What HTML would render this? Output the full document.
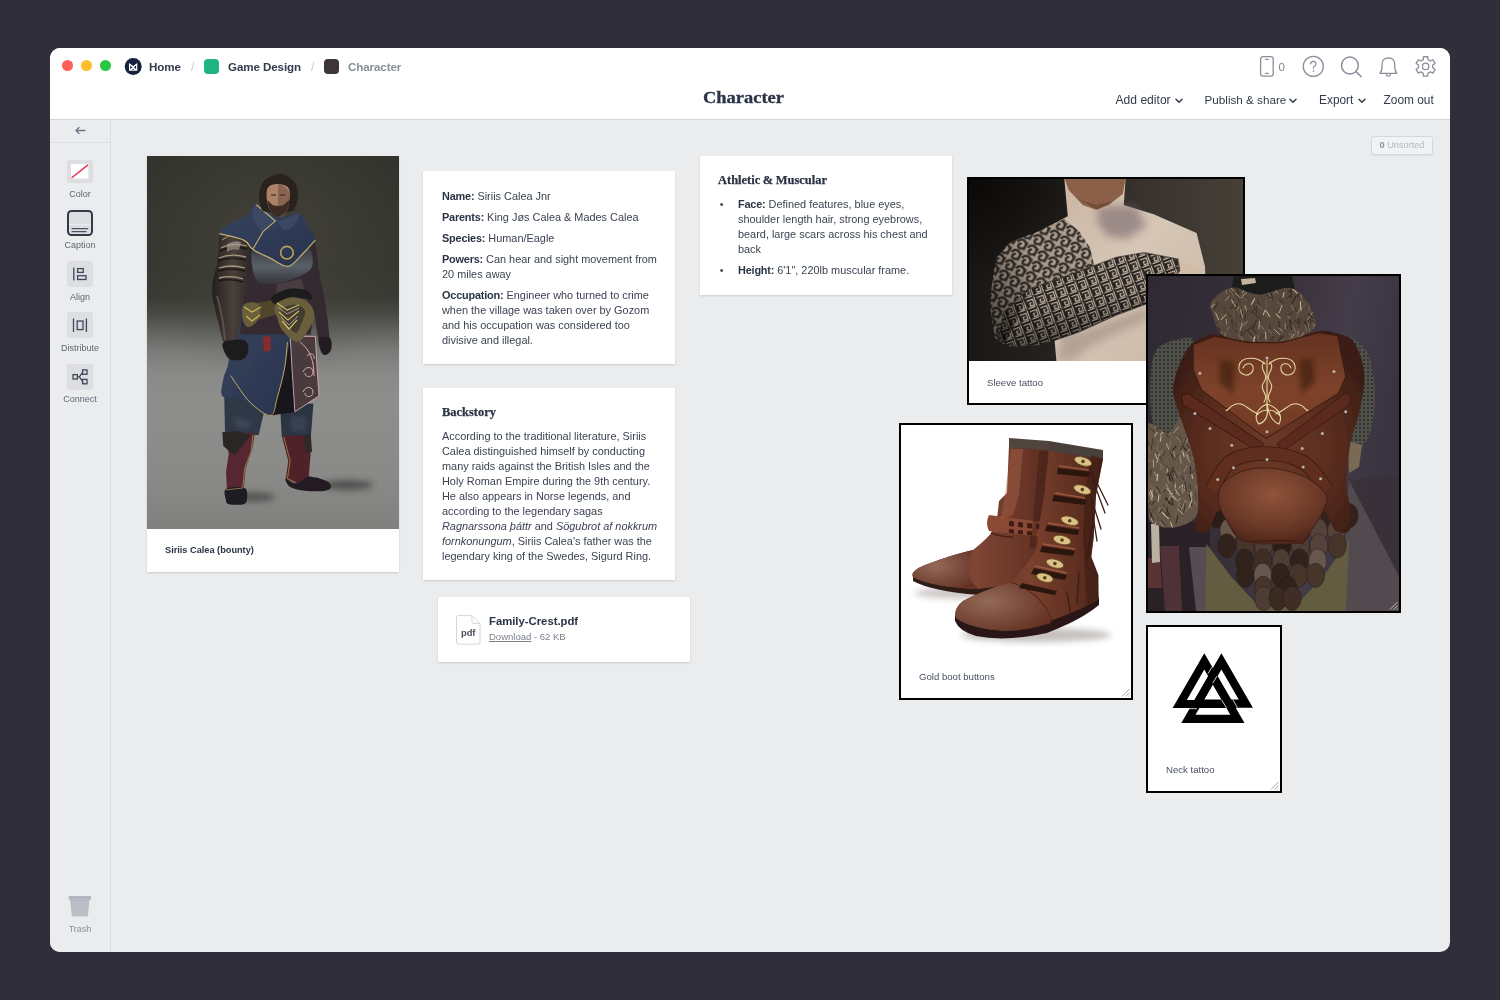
<!DOCTYPE html>
<html>
<head>
<meta charset="utf-8">
<title>Character</title>
<style>
*{box-sizing:border-box;margin:0;padding:0}
html,body{width:1500px;height:1000px;overflow:hidden;background:#302e39;font-family:"Liberation Sans",sans-serif;color:#323b4a}
#win{position:absolute;left:50px;top:48px;width:1400px;height:904px;border-radius:10px;overflow:hidden;background:#ebecee;will-change:transform}
#hdr{position:absolute;left:0;top:0;width:1400px;height:72px;background:#fff;border-bottom:1px solid #d4d6da}
.dot{position:absolute;top:12px;width:11px;height:11px;border-radius:50%}
.crumb{position:absolute;top:11.500px;font-size:11.6px;font-weight:bold;color:#323b4a;line-height:14px;letter-spacing:-0.1px}
.sep{position:absolute;top:11.500px;font-size:12px;color:#c9ccd1;line-height:14px}
.sq{position:absolute;top:11px;width:15px;height:15px;border-radius:4px}
#title{position:absolute;left:0;width:1387px;text-align:center;top:38.700px;-webkit-text-stroke:.3px #2b3445;font-family:"Liberation Serif",serif;font-weight:bold;font-size:17.6px;line-height:20px;color:#2b3445;transform:scaleX(1.05)}
.menu{position:absolute;top:45px;font-size:11.9px;line-height:14px;color:#323b4a;white-space:nowrap}
#side{position:absolute;left:0;top:72px;width:61px;height:832px;border-right:1px solid #dcdde0;background:#ebecee}
#back{position:absolute;left:0;top:0;width:60px;height:23px;border-bottom:1px solid #dcdde0}
.tool{position:absolute;left:0;width:60px;text-align:center;font-size:9px;line-height:11px;color:#5f6672}
.tbox{position:absolute;left:17px;width:26px;height:26px;border-radius:3px;background:#dddee1}
.card{position:absolute;background:#fff;box-shadow:0 1px 2px rgba(0,0,0,.14)}
.txt{font-size:10.2px;line-height:15px;color:#3b4352;white-space:nowrap}
.sx{transform:scaleX(1.07);transform-origin:0 0}
.txt b{color:#2b3445;letter-spacing:-.18px}
.txt p{margin-bottom:6px}
.h{font-family:"Liberation Serif",serif;font-weight:bold;font-size:12.100px;line-height:15px;color:#2b3445;transform:scaleX(1.03);transform-origin:0 0;-webkit-text-stroke:.25px #2b3445;word-spacing:-.5px}
.bimg{position:absolute;background:#fff;border:2px solid #000}
.cap{position:absolute;font-size:9.6px;line-height:11px;color:#4a5160;white-space:nowrap}
</style>
</head>
<body>
<div id="win">
  <div id="hdr">
    <div class="dot" style="left:12px;background:#fe5f57"></div>
    <div class="dot" style="left:31px;background:#febc2e"></div>
    <div class="dot" style="left:49.5px;background:#28c840"></div>

    <svg style="position:absolute;left:74px;top:9px" width="19" height="19" viewBox="0 0 19 19"><circle cx="9.200" cy="9.600" r="8.500" fill="#15213a"/><path d="M5 6L9.200 8.900L13.300 6V13.800H5z" fill="#fff"/><path d="M6.200 8.400l2.100 1.900-2.100 1.900zM12.100 8.400l-2.100 1.900 2.100 1.900zM8.100 13l1.100-1.300 1.100 1.300z" fill="#15213a"/></svg>

    <div class="crumb" style="left:99px">Home</div>
    <div class="sep" style="left:141px">/</div>
    <div class="sq" style="left:154px;background:#1fb583"></div>
    <div class="crumb" style="left:178px">Game Design</div>
    <div class="sep" style="left:261px">/</div>
    <div class="sq" style="left:274px;background:#3e3536"></div>
    <div class="crumb" style="left:298px;color:#8a8f99">Character</div>
    <div id="title">Character</div>

    <svg style="position:absolute;left:1205px;top:5px" width="190" height="28" viewBox="0 0 190 28" fill="none" stroke="#8a8f99" stroke-width="1.3" stroke-linecap="round" stroke-linejoin="round">
      <rect x="5.6" y="3.6" width="12.6" height="19.6" rx="2.4"/><path d="M10.6 6.3h2.6M10.4 20.3h3"/>
      <circle cx="58.3" cy="13.4" r="10"/><path d="M55.6 10.9q.2-2.5 2.8-2.5 2.6.1 2.6 2.3 0 1.500-1.400 2.300-1.300.8-1.300 2.200" stroke-width="1.2"/><circle cx="58.300" cy="18" r=".500" fill="#8a8f99" stroke-width=".6"/>
      <circle cx="94.900" cy="12.500" r="8.400" stroke-width="1.500"/><path d="M101 18.600l5.200 5.200" stroke-width="1.500"/>
      <path d="M125 20.300q2-2.300 2-5.800v-3q0-6.300 6.400-6.600 6.400.3 6.400 6.600v3q0 3.500 2 5.800z"/><path d="M131.400 21.300q.3 1.900 2 1.900 1.700 0 2-1.900"/>
      <circle cx="170.6" cy="13.4" r="3.2"/>
      <path d="M172.94 6.59L172.74 3.73L168.46 3.73L168.26 6.59L165.88 7.97L163.30 6.71L161.16 10.42L163.53 12.03L163.53 14.77L161.16 16.38L163.30 20.09L165.88 18.83L168.26 20.21L168.46 23.07L172.74 23.07L172.94 20.21L175.32 18.83L177.90 20.09L180.04 16.38L177.67 14.77L177.67 12.03L180.04 10.42L177.90 6.71L175.32 7.97z"/>
    </svg>
    <div style="position:absolute;left:1228.600px;top:13.300px;font-size:11.500px;line-height:12px;color:#7d828d">0</div>

    <div class="menu" style="left:1065.500px;font-size:12.1px">Add editor</div>
    <svg style="position:absolute;left:1125px;top:50px" width="8" height="6" viewBox="0 0 8 6"><path d="M1 1.200l3 3 3-3" fill="none" stroke="#323b4a" stroke-width="1.500" stroke-linecap="round" stroke-linejoin="round"/></svg>
    <div class="menu" style="left:1154.500px;font-size:11.7px">Publish &amp; share</div>
    <svg style="position:absolute;left:1239px;top:50px" width="8" height="6" viewBox="0 0 8 6"><path d="M1 1.200l3 3 3-3" fill="none" stroke="#323b4a" stroke-width="1.500" stroke-linecap="round" stroke-linejoin="round"/></svg>
    <div class="menu" style="left:1269px">Export</div>
    <svg style="position:absolute;left:1308px;top:50px" width="8" height="6" viewBox="0 0 8 6"><path d="M1 1.200l3 3 3-3" fill="none" stroke="#323b4a" stroke-width="1.500" stroke-linecap="round" stroke-linejoin="round"/></svg>
    <div class="menu" style="left:1333.500px">Zoom out</div>
  </div>
  <div id="side">
    <div id="back"></div>

    <svg style="position:absolute;left:25px;top:5px" width="11" height="11" viewBox="0 0 11 11"><path d="M1 5.5h9M4 2.5l-3 3 3 3" fill="none" stroke="#6f7683" stroke-width="1.3" stroke-linecap="round" stroke-linejoin="round"/></svg>
    <!-- color -->
    <div class="tbox" style="top:40px;height:23px"></div>
    <svg style="position:absolute;left:21px;top:44px" width="18" height="15" viewBox="0 0 18 15"><rect width="17.4" height="14.6" fill="#fff"/><path d="M0.5 14L17 0.8" stroke="#e8335f" stroke-width="1.6"/></svg>
    <div class="tool" style="top:69px">Color</div>
    <!-- caption -->
    <div class="tbox" style="top:90px;background:#dddee1;border:2px solid #323b4a;border-radius:4.500px"></div>
    <svg style="position:absolute;left:17px;top:90px" width="26" height="26" viewBox="0 0 26 26"><path d="M2 14.5h22" stroke="#ebecee" stroke-width="1"/><path d="M4.6 18.6h16.6M4.6 21.6h15" stroke="#4a5262" stroke-width="1.1"/></svg>
    <div class="tool" style="top:120px">Caption</div>
    <!-- align -->
    <div class="tbox" style="top:141px"></div>
    <svg style="position:absolute;left:17px;top:141px" width="26" height="26" viewBox="0 0 26 26"><path d="M6.8 6.5v13" stroke="#3f4757" stroke-width="1.3" fill="none"/><rect x="10.6" y="7.6" width="5.6" height="3.8" fill="none" stroke="#3f4757" stroke-width="1.3"/><rect x="10.6" y="14.7" width="8.4" height="3.8" fill="none" stroke="#3f4757" stroke-width="1.3"/></svg>
    <div class="tool" style="top:172px">Align</div>
    <!-- distribute -->
    <div class="tbox" style="top:192px"></div>
    <svg style="position:absolute;left:17px;top:192px" width="26" height="26" viewBox="0 0 26 26"><path d="M6.5 6.5v13.5M19.4 6.5v13.5" stroke="#3f4757" stroke-width="1.3" fill="none"/><rect x="10.2" y="9" width="5.8" height="8.6" fill="none" stroke="#3f4757" stroke-width="1.3"/></svg>
    <div class="tool" style="top:223px">Distribute</div>
    <!-- connect -->
    <div class="tbox" style="top:244px"></div>
    <svg style="position:absolute;left:17px;top:244px" width="26" height="26" viewBox="0 0 26 26"><g fill="none" stroke="#3f4757" stroke-width="1.3"><rect x="6" y="10.6" width="4.4" height="4.4"/><rect x="15.6" y="5.9" width="4.4" height="4.4"/><rect x="15.6" y="15.4" width="4.4" height="4.4"/><path d="M10.4 12.8h2l3.2-4.4M12.4 12.8l3.2 4.6"/></g></svg>
    <div class="tool" style="top:274px">Connect</div>
    <!-- trash -->
    <svg style="position:absolute;left:18px;top:775px" width="24" height="23" viewBox="0 0 24 23"><path d="M2.2 4.5h19.2l-1.3 15.4q-.2 1.6-1.8 1.6H5.4q-1.6 0-1.8-1.6z" fill="#bcbec5"/><rect x="0.8" y="1" width="22.2" height="3.8" rx="0.6" fill="#b3b6be"/><path d="M2.4 5.4h19" stroke="#aab0bb" stroke-width="0.8"/></svg>
    <div class="tool" style="top:804px;color:#8a8f99">Trash</div>

  </div>

  <div style="position:absolute;left:1321px;top:88px;width:62px;height:19px;border:1px solid #d5d7db;border-radius:3px;background:#f1f2f3;box-shadow:0 1px 1px rgba(0,0,0,.06);font-size:9.200px;line-height:17px;color:#b5b8be;text-align:center;white-space:nowrap"><b style="color:#8a8f99">0</b> Unsorted</div>


  <!-- character card -->
  <div class="card" style="left:97px;top:108px;width:252px;height:416px">
    <div id="charimg" style="position:absolute;left:0;top:0;width:252px;height:373px;background:radial-gradient(ellipse 60% 38% at 50% 22%,rgba(75,75,66,.55) 0%,rgba(75,75,66,0) 100%),linear-gradient(#33332d 0%,#363630 30%,#3a3a34 38%,#4a4a45 42.500%,#646461 47.500%,#7b7b79 52.500%,#898987 58%,#8e8e8c 65%,#8a8a88 85%,#80807e 100%);overflow:hidden"><svg id="charsvg" style="position:absolute;left:0;top:0" width="252" height="372" viewBox="0 0 252 372">
<defs>
<filter id="cb" x="-5%" y="-5%" width="110%" height="110%"><feGaussianBlur stdDeviation=".55"/></filter>
<filter id="cs" x="-30%" y="-100%" width="160%" height="300%"><feGaussianBlur stdDeviation="3"/></filter>
<filter id="cs2" x="-30%" y="-30%" width="160%" height="160%"><feGaussianBlur stdDeviation="2"/></filter>
<linearGradient id="cblue" x1="0" y1="0" x2="1" y2="1"><stop offset="0" stop-color="#36435f"/><stop offset="1" stop-color="#29334d"/></linearGradient>
<linearGradient id="csteel" x1="0" y1="0" x2="0" y2="1"><stop offset="0" stop-color="#3b3f45"/><stop offset=".5" stop-color="#596067"/><stop offset="1" stop-color="#34353a"/></linearGradient>
<linearGradient id="carm" x1="0" y1="0" x2="1" y2="0"><stop offset="0" stop-color="#241f1e"/><stop offset=".5" stop-color="#4a403b"/><stop offset="1" stop-color="#2a2423"/></linearGradient>
</defs>
<ellipse cx="200" cy="329" rx="26" ry="5" fill="#3c3c3c" opacity=".75" filter="url(#cs)"/>
<ellipse cx="108" cy="341" rx="20" ry="4.500" fill="#3c3c3c" opacity=".7" filter="url(#cs)"/>
<g filter="url(#cb)">
<!-- legs -->
<path d="M77.2 238.1L119.0 247.4L111.6 279.0L78.1 279.0Z" fill="#2f3746"/><path d="M133.0 249.2L166.4 247.4L163.7 282.7L134.8 280.8Z" fill="#2c3442"/>
<path d="M87.4 260.4L104.1 264.1L101.4 273.4L87.4 271.5Z" fill="#56657a" opacity=".3" filter="url(#cs2)"/><path d="M143.2 260.4L159.9 260.4L158.1 275.3L144.1 275.3Z" fill="#56657a" opacity=".3" filter="url(#cs2)"/>
<!-- boots -->
<path d="M76.3 276.2L107.9 277.1L105.1 293.9L98.6 312.5L96.7 332.9L80.0 334.8L79.0 316.2L81.8 297.6Z" fill="#562830"/><path d="M134.8 279.9L161.8 279.0L163.7 297.6L161.8 319.9L167.4 323.6L148.8 327.3L138.6 323.6L141.3 305.0Z" fill="#4f242c"/>
<path d="M79.0 332.9C82.1 330.9 94.1 330.4 97.6 332.0C101.1 333.5 100.2 339.5 100.1 342.2C99.9 344.9 99.7 347.2 96.7 348.2C93.7 349.2 84.8 348.9 81.8 348.2C78.9 347.5 79.5 346.6 79.0 344.1C78.6 341.5 75.9 334.9 79.0 332.9Z" fill="#1d1b21"/><path d="M138.6 322.7C139.5 322.1 144.9 327.7 148.8 327.3C152.7 327.0 156.8 321.3 161.8 320.8C166.8 320.4 174.8 323.0 178.5 324.6C182.3 326.1 184.1 328.4 184.1 330.1C184.1 331.8 182.9 334.0 178.5 334.8C174.2 335.6 164.0 335.4 158.1 334.8C152.2 334.2 146.5 333.1 143.2 331.1C139.9 329.0 137.6 323.3 138.6 322.7Z" fill="#201d24"/>
<path d="M75.3 276.2L89.3 274.9L104.1 279.0L87.4 299.4L76.3 290.1Z" fill="#2c2627"/><path d="M156.2 279.0L163.7 278.1L165.1 295.7L159.0 297.6Z" fill="#2f292b"/>
<path d="M106.0 279.0L104.1 295.7L97.6 312.5L95.8 332.0L79.0 333.9" fill="none" stroke="#b99a4a" stroke-width=".7"/><path d="M136.7 280.8L143.2 305.0L140.4 322.7L148.8 326.4" fill="none" stroke="#b99a4a" stroke-width=".7"/>
<!-- tunic -->
<path d="M137.6 182.3L144.1 182.3L148.8 255.7L123.7 259.5Z" fill="#14151b"/>
<path d="M87.4 158.1C97.3 150.4 132.8 149.7 141.3 158.1C149.9 166.5 140.4 194.4 138.6 208.3C136.7 222.3 132.7 233.3 130.2 241.8C127.7 250.3 126.8 257.4 123.7 259.5C120.6 261.5 115.5 255.9 111.6 253.9C107.7 251.9 104.1 249.4 100.4 247.4C96.7 245.4 93.5 243.0 89.3 241.8C85.1 240.6 77.5 243.0 75.3 239.9C73.2 236.8 75.2 229.1 76.3 223.2C77.3 217.3 80.0 215.4 81.8 204.6C83.7 193.7 77.5 165.9 87.4 158.1Z" fill="url(#cblue)"/>
<path d="M140.4 186.0C139.9 190.3 139.3 202.7 137.6 212.0C135.9 221.3 132.5 233.9 130.2 241.8C127.9 249.7 128.0 258.5 123.7 259.5C119.3 260.4 109.6 252.2 104.1 247.4C98.7 242.6 94.5 235.3 91.1 230.6C87.7 226.0 84.9 221.3 83.7 219.5" fill="none" stroke="#cdb763" stroke-width=".9"/>
<path d="M143.2 180.4L168.3 180.4L170.2 213.9L172.0 239.9L147.9 255.7L145.1 213.9Z" fill="#4a3a3d" stroke="#d5acaa" stroke-width=".9"/>
<g fill="none" stroke="#d5acaa" stroke-width="1"><path d="M153 186c10 8 14 18 14 34M156 216c2-6 10-6 10 0s-8 6-8 1M156 236c2-6 10-6 10 0s-8 6-8 1M160 200c4-4 8-2 7 3"/></g>
<path d="M116.2 180.4L123.7 180.4L123.1 195.3L116.8 195.3Z" fill="#8c2b2b"/>
<!-- arms -->
<path d="M73.5 78.1C76.3 74.4 82.3 80.3 87.4 81.8C92.5 83.4 101.2 82.4 104.1 87.4C107.1 92.4 106.3 102.6 105.1 111.6C103.8 120.6 98.7 132.0 96.7 141.3C94.7 150.6 94.2 159.9 93.0 167.4C91.7 174.8 91.7 182.6 89.3 186.0C86.8 189.4 81.1 190.9 78.1 187.8C75.2 184.7 73.8 176.4 71.6 167.4C69.4 158.4 65.2 144.4 65.1 133.9C64.9 123.4 69.3 113.4 70.7 104.1C72.1 94.8 70.7 81.8 73.5 78.1Z" fill="url(#carm)"/><path d="M161.8 83.7C163.2 78.1 166.6 82.1 168.3 87.4C170.0 92.7 170.3 105.1 172.0 115.3C173.7 125.5 176.8 138.2 178.5 148.8C180.2 159.3 181.5 172.0 182.3 178.5C183.0 185.0 184.7 186.3 183.2 187.8C181.6 189.4 175.6 192.8 173.0 187.8C170.3 182.9 169.5 169.2 167.4 158.1C165.2 146.9 160.9 133.3 159.9 120.9C159.0 108.5 160.4 89.3 161.8 83.7Z" fill="#332a2d"/>
<path d="M77.2 186.0C80.4 184.1 92.7 182.9 96.7 184.1C100.7 185.4 101.4 190.3 101.4 193.4C101.4 196.5 99.7 201.0 96.7 202.7C93.8 204.4 86.9 204.9 83.7 203.7C80.4 202.4 78.3 198.2 77.2 195.3C76.1 192.4 73.9 187.9 77.2 186.0Z" fill="#1f1c1d"/><path d="M172.0 182.3C173.6 180.1 181.2 180.4 183.2 182.3C185.2 184.1 184.9 190.6 184.1 193.4C183.3 196.2 180.2 198.7 178.5 199.0C176.8 199.3 175.0 198.1 173.9 195.3C172.8 192.5 170.5 184.5 172.0 182.3Z" fill="#221f21"/>
<g stroke="#17130f" stroke-width="1.600" fill="none" opacity=".8"><path d="M73 95q12-6 27-2M71 105q12-5 28-1M71 115q12-4 27 0M71 125q12-3 25 1"/></g><g stroke="#b3a48a" stroke-width="1.300" fill="none" opacity=".9"><path d="M74 92q12-6 26-2M72 102q12-5 27-1M72 112q12-4 26 0M72 122q12-3 24 1"/></g><path d="M80 88q8-4 14-2l-2 8q-8-2-12 2z" fill="#a39a8c" opacity=".7"/><path d="M70 140q6 20 8 44" stroke="#6a5f58" stroke-width="2" fill="none" opacity=".7"/>
<path d="M75 84q10-8 26-4" stroke="#b39b55" stroke-width="1" fill="none"/>
<!-- torso -->
<path d="M104.1 87.4L163.7 81.8L168.3 119.0L167.4 148.8L163.7 178.5L93.0 178.5L96.7 141.3L105.1 111.6Z" fill="#352b30"/>
<path d="M106.9 93.0C112.4 90.8 132.2 109.7 141.3 109.7C150.5 109.7 157.9 92.7 161.8 93.0C165.7 93.3 166.8 106.8 164.6 111.6C162.4 116.4 155.1 119.0 148.8 121.8C142.4 124.6 133.1 128.2 126.5 128.3C119.8 128.5 112.1 128.6 108.8 122.7C105.5 116.9 101.5 95.2 106.9 93.0Z" fill="url(#csteel)"/>
<path d="M130.2 128.3L154.4 122.7L161.8 148.8L141.3 154.4L128.3 145.1Z" fill="#4a3d42"/>
<!-- belt -->
<path d="M109.7 146.9L130.2 143.2L130.2 158.1L111.6 163.7Z" fill="#51452c"/><path d="M124.6 141.3C126.5 138.7 135.5 134.1 141.3 133.0C147.2 131.9 156.1 133.1 159.9 134.8C163.8 136.5 166.4 142.0 164.6 143.2C162.7 144.4 154.5 141.3 148.8 142.3C143.0 143.2 134.2 148.9 130.2 148.8C126.2 148.6 122.7 144.0 124.6 141.3Z" fill="#1c1a1b"/>
<path d="M96.7 148.8C99.0 146.0 106.9 145.7 109.7 146.9C112.5 148.2 113.4 153.1 113.4 156.2C113.4 159.3 111.7 163.0 109.7 165.5C107.7 168.0 103.7 171.4 101.4 171.1C99.0 170.8 96.6 167.4 95.8 163.7C95.0 159.9 94.4 151.6 96.7 148.8Z" fill="#6a5e3a"/><path d="M128.3 148.8C130.8 145.4 139.5 141.7 145.1 141.3C150.6 141.0 158.1 143.8 161.8 146.9C165.5 150.0 167.4 155.6 167.4 159.9C167.4 164.3 164.6 168.6 161.8 173.0C159.0 177.3 155.0 185.7 150.6 186.0C146.3 186.3 139.2 178.8 135.8 174.8C132.4 170.8 131.4 166.1 130.2 161.8C128.9 157.5 125.8 152.2 128.3 148.8Z" fill="#6b5f3c"/>
<path d="M133.9 154.4C135.1 151.3 142.9 148.8 146.9 148.8C151.0 148.8 156.8 151.3 158.1 154.4C159.3 157.5 155.9 163.7 154.4 167.4C152.8 171.1 151.3 176.7 148.8 176.7C146.3 176.7 142.0 171.1 139.5 167.4C137.0 163.7 132.7 157.5 133.9 154.4Z" fill="#3a3230" opacity=".8"/>
<g stroke="#cdb85e" stroke-width="1.200" fill="none"><path d="M97 151l8 5 9-5M99 160l6 5 8-6M130 147l10 7 12-5M132 156l9 8 11-9M135 165l7 8 8-9"/></g><g stroke="#a89a94" stroke-width="1" fill="none"><path d="M131 151l9 7 12-6M134 161l8 8 9-9"/></g>
<!-- cape -->
<path d="M108.8 50.2C113.8 50.5 123.1 60.1 130.2 61.4C137.3 62.6 146.0 55.5 151.6 57.7C157.2 59.8 160.9 70.1 163.7 74.4C166.4 78.7 169.5 80.0 168.3 83.7C167.1 87.4 160.7 92.4 156.2 96.7C151.7 101.0 146.9 109.0 141.3 109.7C135.8 110.5 128.6 104.1 122.7 101.4C116.9 98.6 110.3 95.9 106.0 93.0C101.7 90.0 102.3 86.3 96.7 83.7C91.1 81.1 74.4 80.0 72.5 77.2C70.7 74.4 80.9 69.9 85.5 67.0C90.2 64.0 96.6 62.3 100.4 59.5C104.3 56.7 103.8 49.9 108.8 50.2Z" fill="url(#cblue)"/>
<path d="M72.5 77.7C76.6 78.8 91.1 81.4 96.7 84.1C102.3 86.7 101.7 90.6 106.0 93.5C110.3 96.5 116.9 99.1 122.7 101.9C128.6 104.7 135.8 111.1 141.3 110.3C146.9 109.5 151.7 101.6 156.2 97.3C160.7 92.9 166.3 86.3 168.3 84.1" fill="none" stroke="#bfab74" stroke-width="1.300"/>
<path d="M108.8 48.0C111.3 47.1 117.3 53.1 120.9 55.8C124.4 58.5 126.8 63.2 130.2 64.2C133.6 65.1 137.8 62.5 141.3 61.4C144.9 60.3 150.3 56.7 151.6 57.7C152.8 58.6 151.1 64.2 148.8 67.0C146.5 69.7 141.0 74.7 137.6 74.4C134.2 74.1 132.0 65.1 128.3 65.1C124.6 65.1 119.0 75.0 115.3 74.4C111.6 73.8 107.1 65.8 106.0 61.4C104.9 57.0 106.3 48.9 108.8 48.0Z" fill="#3a4764"/>
<path d="M109.4 48.7L128.3 65.1L116.2 75.3L106.0 93.0" fill="none" stroke="#bfab74" stroke-width="1.200"/>
<circle cx="139.900" cy="96.700" r="6.300" fill="none" stroke="#b9a05a" stroke-width="1.700"/>
<!-- head -->
<path d="M119.0 23.2C122.3 21.3 129.3 17.5 133.9 17.9C138.6 18.2 144.1 21.7 146.9 25.1C149.8 28.5 150.7 34.0 151.0 38.1C151.3 42.2 150.1 46.9 148.8 49.8C147.5 52.8 148.2 54.8 143.2 55.8C138.2 56.8 124.0 56.7 119.0 55.8C114.1 54.9 114.6 53.0 113.4 50.2C112.3 47.4 111.8 42.5 112.0 39.1C112.1 35.6 113.2 32.4 114.4 29.8C115.6 27.1 115.8 25.2 119.0 23.2Z" fill="#2a211d"/>
<path d="M120.9 31.6C122.6 28.8 126.8 27.9 130.2 27.9C133.6 27.9 139.3 28.8 141.3 31.6C143.4 34.4 142.9 40.6 142.3 44.6C141.7 48.7 139.6 53.3 137.6 55.8C135.6 58.3 132.5 59.5 130.2 59.5C127.9 59.5 125.4 58.3 123.7 55.8C122.0 53.3 120.4 48.7 120.0 44.6C119.5 40.6 119.2 34.4 120.9 31.6Z" fill="#ab8268"/>
<path d="M131 28q8 2 11 8v14q-2 8-7 12l-4-2z" fill="#6e4e3e" opacity=".55"/><path d="M120.5 44.6C121.0 43.5 123.9 48.5 126.5 49.3C129.0 50.1 133.2 50.1 135.8 49.3C138.3 48.5 141.4 43.5 141.9 44.6C142.4 45.7 140.5 53.2 138.6 55.8C136.6 58.4 132.7 60.4 130.2 60.4C127.7 60.5 125.3 58.8 123.7 56.2C122.1 53.5 120.0 45.8 120.5 44.6Z" fill="#3d2b23"/>
<path d="M124 39h5M133 39h5" stroke="#2a1e1a" stroke-width="1"/>
<path d="M121 30q10-8 20 0l1-6q-11-8-22 0z" fill="#2a211d"/>
</g>
</svg></div>
    <div class="cap" style="left:18px;top:388.500px;font-weight:bold;color:#2b3445;font-size:9.200px">Siriis Calea (bounty)</div>
  </div>
  <!-- info card -->
  <div class="card txt" id="info" style="left:373px;top:123px;width:252px;height:192.500px;padding:17.600px 18px 0 18.500px"><div class="sx">
    <p><b>Name:</b> Siriis Calea Jnr</p>
    <p><b>Parents:</b> King Jøs Calea &amp; Mades Calea</p>
    <p><b>Species:</b> Human/Eagle</p>
    <p><b>Powers:</b> Can hear and sight movement from<br>20 miles away</p>
    <p><b>Occupation:</b> Engineer who turned to crime<br>when the village was taken over by Gozom<br>and his occupation was considered too<br>divisive and illegal.</p></div>
  </div>
  <!-- backstory card -->
  <div class="card txt" id="back2" style="left:373px;top:340px;width:252px;height:192px;padding:17px 18px 0 18.500px">
    <div class="h" style="margin-bottom:8.500px">Backstory</div>
    <p class="sx">According to the traditional literature, Siriis<br>Calea distinguished himself by conducting<br>many raids against the British Isles and the<br>Holy Roman Empire during the 9th century.<br>He also appears in Norse legends, and<br>according to the legendary sagas<br><i>Ragnarssona þáttr</i> and <i>Sögubrot af nokkrum</i><br><i>fornkonungum</i>, Siriis Calea's father was the<br>legendary king of the Swedes, Sigurd Ring.</p>
  </div>
  <!-- file card -->
  <div class="card" style="left:388px;top:549px;width:252px;height:65px">
    <svg style="position:absolute;left:18px;top:18px" width="25" height="31" viewBox="0 0 25 31"><path d="M2.500 .6h13.500l8 8v18.600q0 2-2 2h-19.500q-2 0-2-2v-24.600q0-2 2-2z" fill="#fff" stroke="#d3d5d9" stroke-width="1"/><path d="M16 .6v6q0 2 2 2h6" fill="none" stroke="#d3d5d9" stroke-width="1"/><text x="12.200" y="20.700" font-weight="bold" opacity=".9" text-anchor="middle" font-family="Liberation Sans, sans-serif" font-size="9.400" fill="#323b4a">pdf</text></svg>
    <div style="position:absolute;left:51px;top:17px;font-size:11.300px;line-height:14px;font-weight:bold;color:#2b3445;white-space:nowrap">Family-Crest.pdf</div>
    <div style="position:absolute;left:51px;top:34.200px;font-size:9.500px;line-height:11px;color:#7b818c;white-space:nowrap"><span style="text-decoration:underline">Download</span> - 62 KB</div>
  </div>
  <!-- athletic card -->
  <div class="card txt" id="ath" style="left:650px;top:108px;width:252px;height:138.500px;padding:17px 18px 0 18px">
    <div class="h" style="margin-bottom:9px">Athletic &amp; Muscular</div>
    <div style="position:relative;margin-left:20px;margin-bottom:6px" class="sx"><span style="position:absolute;left:-17px;top:0">•</span><b>Face:</b> Defined features, blue eyes,<br>shoulder length hair, strong eyebrows,<br>beard, large scars across his chest and<br>back</div>
    <div style="position:relative;margin-left:20px" class="sx"><span style="position:absolute;left:-17px;top:0">•</span><b>Height:</b> 6'1", 220lb muscular frame.</div>
  </div>
  <!-- sleeve tattoo -->
  <div class="bimg" style="left:917px;top:129px;width:278px;height:228px">
    <div id="sleeve" style="position:absolute;left:0;top:0;width:274px;height:182px;background:#2e2a25;overflow:hidden"><svg id="sleevesvg" style="position:absolute;left:0;top:0" width="274" height="182" viewBox="0 0 274 182">
<defs>
<linearGradient id="sbg" x1="0" y1="0" x2="1" y2="0"><stop offset="0" stop-color="#1a1816"/><stop offset=".35" stop-color="#262320"/><stop offset=".62" stop-color="#37322d"/><stop offset="1" stop-color="#464038"/></linearGradient>
<linearGradient id="skin" x1="0" y1="0" x2="1" y2="1"><stop offset="0" stop-color="#c7b09c"/><stop offset=".5" stop-color="#d6c6b6"/><stop offset="1" stop-color="#c8b7a6"/></linearGradient>
<pattern id="tat" width="11" height="11" patternUnits="userSpaceOnUse" patternTransform="rotate(-20)"><rect width="11" height="11" fill="#262321"/><path d="M1 2.500h6.500v6h-4v-3h2M9.500 .500v10M.500 10.300h7.500" fill="none" stroke="#cbbaa8" stroke-width="1.250"/></pattern>
<pattern id="tat2" width="12" height="12" patternUnits="userSpaceOnUse" patternTransform="rotate(30)"><rect width="12" height="12" fill="#b3a394"/><path d="M1.500 6a4.500 4.500 0 1 1 4.500 4.500a2.200 2.200 0 1 1 0-4.500M10.500 1.500v9" fill="none" stroke="#332e2b" stroke-width="2.300"/></pattern>
<linearGradient id="fsh" x1="0" y1="0" x2=".25" y2="1"><stop offset="0" stop-color="#000" stop-opacity="0"/><stop offset=".55" stop-color="#000" stop-opacity=".05"/><stop offset="1" stop-color="#000" stop-opacity=".5"/></linearGradient><linearGradient id="ush" x1="1" y1="0" x2="0" y2=".6"><stop offset="0" stop-color="#000" stop-opacity="0"/><stop offset=".6" stop-color="#000" stop-opacity=".08"/><stop offset="1" stop-color="#000" stop-opacity=".45"/></linearGradient><filter id="sb" x="-5%" y="-5%" width="110%" height="110%"><feGaussianBlur stdDeviation=".7"/></filter>
<filter id="sb2" x="-20%" y="-20%" width="140%" height="140%"><feGaussianBlur stdDeviation="4"/></filter>
</defs>
<rect width="274" height="182" fill="url(#sbg)"/><radialGradient id="svg2" cx="0" cy="0" r=".6"><stop offset="0" stop-color="#070504" stop-opacity=".8"/><stop offset="1" stop-color="#070504" stop-opacity="0"/></radialGradient><rect width="274" height="182" fill="url(#svg2)"/>
<g filter="url(#sb)">
<path d="M95.1 -2.0L156.7 -2.0L154.8 26.0L184.7 35.3L227.6 54.0L236.0 87.6L238.8 183.9L87.6 183.9L85.7 162.3L54.0 110.0L70.8 52.1L98.8 37.2Z" fill="url(#skin)"/>
<path d="M128.7 27.9L166.0 26.0L177.2 46.5L158.5 59.6L139.9 57.7L128.7 44.7Z" fill="#6f5f68" opacity=".55" filter="url(#sb2)"/>
<path d="M95.1 -2.0L156.7 -2.0L153.9 14.8L139.9 26.0L126.8 30.7L113.7 26.0L99.7 11.1Z" fill="#8a6048"/>
<path d="M110.0 20.4L128.7 30.7L143.6 22.3L126.8 26.0Z" fill="#5a3a2a" opacity=".5"/>
<path d="M70.8 52.1L95.1 40.0L110.0 52.1L121.2 68.9L124.9 85.7L110.0 98.8L76.4 108.1L59.6 117.5L35.3 166.0L26.0 158.5L21.3 128.7L23.2 102.5L27.9 78.3L40.9 63.3Z" fill="url(#tat2)"/>
<path d="M59.6 110.0L76.4 108.1L110.0 98.8L124.9 85.7L102.5 95.1Z" fill="#1c1a18" opacity=".35"/><path d="M88 182L92 150L112 152L180 128L178 140L120 168L104 182Z" fill="#7a6a60" opacity=".35" filter="url(#sb2)"/>
<path d="M203.3 80.1L222.0 85.7L233.2 91.3L227.6 96.0L208.9 95.1L201.5 98.8Z" fill="#d2bca8"/>
<path d="M59.6 110.0L102.5 95.1L147.3 78.3L175.3 73.6L208.9 80.1L210.8 91.3L203.3 102.5L177.2 124.9L147.3 136.1L110.0 152.9L72.7 166.0L39.1 167.9L29.7 156.7L35.3 132.4Z" fill="url(#tat)"/>
<path d="M59.6 110.0L102.5 95.1L147.3 78.3L175.3 73.6L208.9 80.1L210.8 91.3L203.3 102.5L177.2 124.9L147.3 136.1L110.0 152.9L72.7 166.0L39.1 167.9L29.7 156.7L35.3 132.4Z" fill="url(#fsh)"/><path d="M70.8 52.1L95.1 40.0L110.0 52.1L121.2 68.9L124.9 85.7L110.0 98.8L76.4 108.1L59.6 117.5L35.3 166.0L26.0 158.5L21.3 128.7L23.2 102.5L27.9 78.3L40.9 63.3Z" fill="url(#ush)"/><path d="M59.6 110.0L102.5 95.1L147.3 78.3L175.3 73.6L208.9 80.1L210.8 91.3L203.3 102.5L177.2 124.9L147.3 136.1L110.0 152.9L72.7 166.0L39.1 167.9L29.7 156.7L35.3 132.4Z" fill="none" stroke="#2a2623" stroke-width="1.200" opacity=".6"/>
</g>
</svg></div>
    <div class="cap" style="left:18px;top:198px">Sleeve tattoo</div>
  </div>
  <!-- boots -->
  <div class="bimg" style="left:849px;top:375px;width:234px;height:277px">
    <div id="boots" style="position:absolute;left:0;top:0;width:230px;height:235px;overflow:hidden"><svg style="position:absolute;left:0;top:0" width="230" height="235" viewBox="0 0 230 235">
<defs>
<linearGradient id="lb1" x1="0" y1="0" x2="1" y2="0"><stop offset="0" stop-color="#6b3627"/><stop offset=".45" stop-color="#7f4534"/><stop offset="1" stop-color="#5c2d20"/></linearGradient>
<linearGradient id="lb2" x1="0" y1="0" x2="1" y2="0"><stop offset="0" stop-color="#63301f"/><stop offset=".5" stop-color="#7a402e"/><stop offset="1" stop-color="#4f261a"/></linearGradient>
<radialGradient id="toe1" cx=".35" cy=".4" r=".7"><stop offset="0" stop-color="#946a58"/><stop offset="1" stop-color="#653325"/></radialGradient>
<filter id="bb" x="-5%" y="-5%" width="110%" height="110%"><feGaussianBlur stdDeviation=".6"/></filter>
<filter id="bs" x="-20%" y="-50%" width="140%" height="200%"><feGaussianBlur stdDeviation="3"/></filter>
</defs>
<rect width="230" height="235" fill="#fff"/>
<ellipse cx="75" cy="168" rx="62" ry="6" fill="#c9c6c4" filter="url(#bs)"/>
<ellipse cx="135" cy="210" rx="75" ry="7" fill="#c4c0be" filter="url(#bs)"/>
<g filter="url(#bb)">
<!-- back boot -->
<path d="M12 156Q30 166 78 170Q105 167 118 158L118 150Q60 160 12 150Z" fill="#2e1b16"/>
<path d="M108 20L150 22L150 150Q110 160 78 164Q30 162 12 152Q9 146 24 140Q50 130 72 125Q88 112 90 108L96 94L98 76L106 68Z" fill="url(#lb1)"/>
<path d="M12 152Q9 146 24 140Q50 130 72 125Q60 150 78 164Q30 162 12 152Z" fill="url(#toe1)"/>
<path d="M108 13L148 16L148 25L108 23Z" fill="#50443e"/>
<path d="M88 90L141 97L141 112L88 106Q84 98 88 90Z" fill="#8a4a34"/>
<path d="M108 96l5 .6v5l-5-.6zM117 97l5 .6v5l-5-.6zM126 98l5 .6v5l-5-.6zM135 99l5 .6v5l-5-.6zM108 104l5 .6v4l-5-.6zM117 105l5 .6v4l-5-.6zM126 106l5 .6v4l-5-.6z" fill="#3c1c14"/>
<path d="M90 108Q100 112 112 112" stroke="#4a2318" stroke-width="1.500" fill="none"/>
<!-- front boot sole -->
<path d="M54 196Q58 206 75 211Q105 217 146 208Q180 195 198 180L198 172Q150 200 100 204Q70 200 54 190Z" fill="#2a1814"/>
<!-- front boot body -->
<path d="M148 17L202 26L202 34L195 70L192.600 113L190.300 132L197.300 150L197.500 175Q150 200 105 206Q70 204 55 193Q52 184 62 176Q80 166 110 157Q126 142 136 122L138.600 99L143.300 70Z" fill="url(#lb2)"/>
<path d="M55 193Q52 184 62 176Q80 166 110 157Q140 170 150 198Q125 206 105 206Q70 204 55 193Z" fill="url(#toe1)"/>
<path d="M110 157Q140 166 152 197" stroke="#4a2318" stroke-width="1" fill="none"/>
<path d="M148 16L202 25L202 34L148 26Z" fill="#4a403b"/>
<!-- slits -->
<g fill="#2c1510"><path d="M157 43L189 47L188 52L156 49Z"/><path d="M153 70L185 75L184 80L151 76Z"/><path d="M146 100L178 105L177 110L144 106Z"/><path d="M141 121L174 126L172 131L139 127Z"/><path d="M133 143L166 150L164 155L130 149Z"/><path d="M121 158L156 166L154 170L118 163Z"/></g>
<g stroke="#a8644a" stroke-width="1.300" fill="none" opacity=".8"><path d="M158 41L188 45"/><path d="M154 68L184 73"/><path d="M147 98L178 103"/><path d="M142 119L174 124"/><path d="M134 141L166 148"/></g>
<path d="M190 30L202 34L195 70L192.600 113L190.300 132L197.300 150L197.500 175L186 182L184 150L182 110L184 70Z" fill="#3a1a12" opacity=".55"/>
<path d="M110 24L122 24L118 70L112 90L100 94L104 70Z" fill="#a8634a" opacity=".45"/>
<path d="M138 26L148 26L143 70L138 100L134 122L128 124L132 96Z" fill="#3a1a12" opacity=".45"/>
<!-- tassels -->
<g stroke="#3b1d15" stroke-width="1.300" fill="none" stroke-linecap="round"><path d="M188 42L207 80"/><path d="M190 50L204 88"/><path d="M188 66L200 104"/><path d="M190 78L196 116"/><path d="M192 100L186 130"/><path d="M178 148L176 178"/><path d="M166 168L170 190"/><path d="M190 112L186 136"/></g>
<!-- buttons -->
<g fill="#d9c384" stroke="#6b4a24" stroke-width=".8">
<ellipse cx="182" cy="36.400" rx="9" ry="4.200" transform="rotate(18 182 36.400)"/>
<ellipse cx="181.300" cy="64.600" rx="9" ry="4.200" transform="rotate(18 181.300 64.600)"/>
<ellipse cx="168.700" cy="95.800" rx="9" ry="4.200" transform="rotate(16 168.700 95.800)"/>
<ellipse cx="161" cy="115" rx="9" ry="4.400" transform="rotate(14 161 115)"/>
<ellipse cx="153.900" cy="138.600" rx="9" ry="4.200" transform="rotate(16 153.900 138.600)"/>
<ellipse cx="143.800" cy="152.700" rx="8.500" ry="4.200" transform="rotate(16 143.800 152.700)"/>
</g>
<g fill="#5a3a22"><circle cx="182" cy="36.400" r="1.800"/><circle cx="181.300" cy="64.600" r="1.800"/><circle cx="168.700" cy="95.800" r="1.800"/><circle cx="161" cy="115" r="1.800"/><circle cx="153.900" cy="138.600" r="1.800"/><circle cx="143.800" cy="152.700" r="1.800"/></g>
</g>
</svg></div>
    <div class="cap" style="left:18px;top:246px">Gold boot buttons</div>
    <svg style="position:absolute;right:1px;bottom:1px" width="9" height="9" viewBox="0 0 9 9"><path d="M8.500 1L1 8.500M8.500 4.500L4.500 8.500M8.500 7.500L7.500 8.500" stroke="#9a9ca2" stroke-width="0.9"/></svg>
  </div>
  <!-- armor -->
  <div class="bimg" style="left:1096px;top:226px;width:255px;height:339px">
    <div id="armor" style="position:absolute;left:0;top:0;width:251px;height:335px;background:#3a3340;overflow:hidden"><svg id="armorsvg" style="position:absolute;left:0;top:0" width="251" height="335" viewBox="0 0 251 335">
<defs>
<linearGradient id="abg" x1="0" y1="0" x2="1" y2=".25"><stop offset="0" stop-color="#2f2934"/><stop offset=".5" stop-color="#373039"/><stop offset=".78" stop-color="#443c49"/><stop offset="1" stop-color="#3a3340"/></linearGradient>
<radialGradient id="lea" cx=".5" cy=".55" r=".6"><stop offset="0" stop-color="#6c3a28"/><stop offset=".6" stop-color="#582c1e"/><stop offset="1" stop-color="#3a1c13"/></radialGradient>
<linearGradient id="shd" x1="0" y1="0" x2="0" y2="1"><stop offset="0" stop-color="#64321f"/><stop offset=".55" stop-color="#7e432b"/><stop offset="1" stop-color="#6e3823"/></linearGradient>
<radialGradient id="low" cx=".5" cy=".35" r=".7"><stop offset="0" stop-color="#90543a"/><stop offset=".6" stop-color="#6d3a28"/><stop offset="1" stop-color="#4a2418"/></radialGradient>
<pattern id="mail" width="4" height="4" patternUnits="userSpaceOnUse"><rect width="4" height="4" fill="#33332f"/><circle cx="2" cy="2" r="1.300" fill="none" stroke="#77776f" stroke-width=".7"/></pattern>
<filter id="ab" x="-5%" y="-5%" width="110%" height="110%"><feGaussianBlur stdDeviation=".5"/></filter>
<filter id="ab2" x="-20%" y="-20%" width="140%" height="140%"><feGaussianBlur stdDeviation="2.500"/></filter>
<clipPath id="furc"><path d="M63.7 25.1C66.7 20.4 76.0 12.8 83.8 11.7C91.6 10.6 101.1 18.4 110.6 18.4C120.1 18.4 132.9 10.9 140.8 11.7C148.6 12.6 153.0 17.6 157.5 23.5C162.0 29.3 167.6 41.1 167.6 46.9C167.6 52.8 163.1 55.6 157.5 58.6C151.9 61.7 143.5 64.2 134.0 65.3C124.6 66.5 110.6 66.5 100.5 65.3C90.5 64.2 79.6 62.8 73.7 58.6C67.9 54.5 67.0 45.8 65.3 40.2C63.7 34.6 60.6 29.9 63.7 25.1Z"/></clipPath><clipPath id="furlc"><path d="M2.7 147.5C6.0 147.5 15.0 158.1 20.1 157.5C25.2 156.9 29.0 139.1 33.5 144.1C38.0 149.1 44.1 172.6 46.9 187.7C49.7 202.7 52.5 224.3 50.3 234.6C48.0 244.9 40.2 247.2 33.5 249.7C26.8 252.2 15.6 252.2 10.1 249.7C4.5 247.2 1.7 249.9 0.0 234.6C-1.7 219.2 -0.4 172.0 0.0 157.5C0.4 143.0 -0.7 147.5 2.7 147.5Z"/></clipPath>
</defs>
<rect width="251" height="335" fill="url(#abg)"/>
<path d="M201 204L251 300L251 335L196 335L197 260Z" fill="#534a50"/><path d="M201 204L251 300L251 200Z" fill="#373036" opacity=".6"/>
<path d="M0 246L62 246L62 335L0 335Z" fill="#2a2127"/><path d="M41 271L60 271L62 335L48 335Z" fill="#564c54"/><path d="M0 282L12 282L14 312L0 312Z" fill="#5a3433"/>
<path d="M12 270L31 270L34 335L17 335Z" fill="#4e3238"/>
<path d="M3 248L11 248L12 286L4 287Z" fill="#b9b0a0"/>
<g filter="url(#ab)">
<path d="M85.5 0.0L144.1 0.0L148.1 20.1L134.0 27.5L93.8 24.1L83.8 13.4Z" fill="#1d1b1b"/>
<path d="M93 3l14-1 1 5-14 2z" fill="#c4b49c"/>
<path d="M58.6 268.1L83.8 301.6L110.6 330.1L147.5 330.1L174.3 301.6L201.1 264.7L197.7 335.1L57.0 335.1Z" fill="#635c41"/>
<path d="M10.1 72.1C15.8 65.6 31.0 62.8 36.9 62.0C42.7 61.2 45.2 60.6 45.2 67.0C45.2 73.4 38.8 87.7 36.9 100.5C34.9 113.4 36.3 134.6 33.5 144.1C30.7 153.6 24.9 156.9 20.1 157.5C15.4 158.1 7.9 156.9 5.0 147.5C2.1 138.0 1.8 113.1 2.7 100.5C3.5 88.0 4.4 78.5 10.1 72.1Z" fill="url(#mail)"/><path d="M203.1 61.0C205.5 62.7 215.6 68.8 219.5 77.1C223.4 85.3 225.8 98.3 226.5 110.6C227.3 122.9 226.4 140.2 223.9 150.8C221.3 161.4 214.7 171.5 211.1 174.3C207.6 177.1 202.4 174.3 202.4 167.6C202.4 160.9 209.0 145.8 211.1 134.0C213.2 122.3 216.2 108.4 215.1 97.2C214.1 86.0 207.1 73.1 205.1 67.0C203.1 61.0 200.7 59.3 203.1 61.0Z" fill="url(#mail)"/>
<path d="M2.7 147.5C6.0 147.5 15.0 158.1 20.1 157.5C25.2 156.9 29.0 139.1 33.5 144.1C38.0 149.1 44.1 172.6 46.9 187.7C49.7 202.7 52.5 224.3 50.3 234.6C48.0 244.9 40.2 247.2 33.5 249.7C26.8 252.2 15.6 252.2 10.1 249.7C4.5 247.2 1.7 249.9 0.0 234.6C-1.7 219.2 -0.4 172.0 0.0 157.5C0.4 143.0 -0.7 147.5 2.7 147.5Z" fill="#65574a"/><g clip-path="url(#furlc)" fill="none"><path d="M49.3 182.2 l3.8 6.6" stroke="#8a7a64" stroke-width="0.9"/><path d="M43.6 218.0 l1.6 6.1" stroke="#6e5e4a" stroke-width="0.8"/><path d="M18.7 211.8 l-4.9 6.1" stroke="#2e241c" stroke-width="0.8"/><path d="M0.0 150.8 l7.4 5.9" stroke="#3a2e24" stroke-width="0.8"/><path d="M14.2 147.2 l-0.7 9.6" stroke="#7a6a55" stroke-width="1.0"/><path d="M41.6 231.1 l-4.8 5.2" stroke="#8a7a64" stroke-width="0.9"/><path d="M46.6 167.5 l3.8 5.0" stroke="#3a2e24" stroke-width="0.7"/><path d="M8.7 235.8 l1.1 8.9" stroke="#40342a" stroke-width="0.6"/><path d="M41.8 163.2 l2.7 6.2" stroke="#40342a" stroke-width="1.0"/><path d="M47.7 175.1 l3.0 7.5" stroke="#8a7a64" stroke-width="0.6"/><path d="M44.1 221.6 l2.9 8.8" stroke="#6e5e4a" stroke-width="0.9"/><path d="M21.2 237.0 l-3.6 5.4" stroke="#40342a" stroke-width="1.1"/><path d="M11.4 177.6 l-2.6 9.5" stroke="#b8a990" stroke-width="1.0"/><path d="M1.3 241.2 l-0.3 7.8" stroke="#8a7a64" stroke-width="0.7"/><path d="M41.3 229.7 l-4.7 5.0" stroke="#6e5e4a" stroke-width="1.2"/><path d="M33.2 199.0 l3.2 5.4" stroke="#2e241c" stroke-width="0.9"/><path d="M18.3 197.9 l3.0 8.8" stroke="#3a2e24" stroke-width="0.9"/><path d="M36.3 233.2 l-1.7 7.1" stroke="#3a2e24" stroke-width="0.7"/><path d="M5.2 191.6 l-5.1 5.3" stroke="#3a2e24" stroke-width="0.8"/><path d="M37.9 178.1 l4.1 8.5" stroke="#b8a990" stroke-width="0.7"/><path d="M18.4 167.3 l2.5 6.1" stroke="#b8a990" stroke-width="1.0"/><path d="M17.1 155.6 l3.4 6.2" stroke="#2e241c" stroke-width="0.7"/><path d="M35.2 166.5 l-2.4 7.6" stroke="#2e241c" stroke-width="1.0"/><path d="M26.7 206.3 l0.8 5.6" stroke="#c8bca4" stroke-width="0.9"/><path d="M2.8 225.8 l-4.4 5.8" stroke="#2e241c" stroke-width="0.8"/><path d="M45.2 215.3 l4.4 8.0" stroke="#7a6a55" stroke-width="0.8"/><path d="M50.0 194.3 l4.7 7.1" stroke="#6e5e4a" stroke-width="1.1"/><path d="M7.3 177.5 l1.5 5.3" stroke="#c8bca4" stroke-width="0.9"/><path d="M27.1 233.8 l0.7 7.3" stroke="#6e5e4a" stroke-width="1.1"/><path d="M10.2 153.8 l-3.5 6.8" stroke="#c8bca4" stroke-width="1.0"/><path d="M34.1 174.1 l2.2 6.5" stroke="#c8bca4" stroke-width="1.2"/><path d="M21.3 202.1 l-3.2 6.2" stroke="#6e5e4a" stroke-width="0.9"/><path d="M12.6 216.6 l-0.8 6.7" stroke="#8a7a64" stroke-width="0.8"/><path d="M8.1 239.2 l0.2 7.6" stroke="#7a6a55" stroke-width="0.7"/><path d="M20.5 204.0 l3.2 3.8" stroke="#7a6a55" stroke-width="1.0"/><path d="M8.3 213.2 l4.8 5.9" stroke="#8a7a64" stroke-width="1.2"/><path d="M43.7 197.7 l0.9 5.0" stroke="#c8bca4" stroke-width="1.0"/><path d="M11.6 171.2 l2.6 4.6" stroke="#6e5e4a" stroke-width="0.9"/><path d="M13.2 244.1 l4.2 6.5" stroke="#3a2e24" stroke-width="1.0"/><path d="M12.4 170.9 l1.8 6.3" stroke="#8a7a64" stroke-width="0.7"/><path d="M35.4 222.1 l3.4 6.3" stroke="#8a7a64" stroke-width="0.8"/><path d="M38.3 161.3 l-1.8 5.9" stroke="#2e241c" stroke-width="0.8"/><path d="M43.7 221.5 l-0.1 8.4" stroke="#40342a" stroke-width="1.2"/><path d="M21.6 174.8 l3.8 8.7" stroke="#2e241c" stroke-width="0.6"/><path d="M8.5 210.6 l4.3 7.6" stroke="#3a2e24" stroke-width="1.1"/><path d="M36.6 182.8 l5.6 5.2" stroke="#6e5e4a" stroke-width="0.7"/><path d="M8.0 246.0 l-3.0 6.6" stroke="#c8bca4" stroke-width="0.7"/><path d="M27.3 213.6 l-1.0 5.5" stroke="#2e241c" stroke-width="0.7"/><path d="M4.0 214.8 l5.6 6.3" stroke="#40342a" stroke-width="1.0"/><path d="M27.8 213.0 l0.6 5.6" stroke="#b8a990" stroke-width="0.6"/><path d="M34.3 187.2 l5.0 4.1" stroke="#6e5e4a" stroke-width="1.1"/><path d="M18.2 148.7 l2.4 4.1" stroke="#7a6a55" stroke-width="1.2"/><path d="M36.3 209.3 l0.6 5.9" stroke="#b8a990" stroke-width="0.8"/><path d="M11.6 187.3 l4.2 4.8" stroke="#8a7a64" stroke-width="0.9"/><path d="M30.0 174.2 l3.6 3.2" stroke="#6e5e4a" stroke-width="0.7"/><path d="M22.8 197.1 l-2.5 9.7" stroke="#40342a" stroke-width="1.0"/><path d="M37.0 198.3 l0.8 6.3" stroke="#8a7a64" stroke-width="0.7"/><path d="M22.7 199.2 l3.7 9.0" stroke="#2e241c" stroke-width="0.9"/><path d="M6.3 247.9 l3.7 5.5" stroke="#c8bca4" stroke-width="0.7"/><path d="M25.1 193.9 l4.2 8.7" stroke="#40342a" stroke-width="0.6"/><path d="M1.2 208.7 l5.3 5.2" stroke="#7a6a55" stroke-width="1.1"/><path d="M2.4 214.2 l2.5 6.8" stroke="#c8bca4" stroke-width="1.1"/><path d="M40.3 176.2 l-0.8 6.8" stroke="#b8a990" stroke-width="0.7"/><path d="M34.2 168.8 l3.9 5.5" stroke="#2e241c" stroke-width="1.0"/><path d="M4.2 214.1 l-0.2 9.8" stroke="#b8a990" stroke-width="0.9"/><path d="M18.2 196.0 l5.6 6.1" stroke="#6e5e4a" stroke-width="0.9"/><path d="M19.6 192.5 l-0.9 4.8" stroke="#c8bca4" stroke-width="0.9"/><path d="M31.9 225.8 l-2.5 5.2" stroke="#8a7a64" stroke-width="1.0"/><path d="M37.4 243.5 l0.2 5.8" stroke="#6e5e4a" stroke-width="1.0"/><path d="M33.3 247.8 l5.0 4.7" stroke="#40342a" stroke-width="0.7"/><path d="M4.9 162.7 l-0.0 6.1" stroke="#40342a" stroke-width="0.9"/><path d="M17.1 188.9 l6.4 5.8" stroke="#40342a" stroke-width="0.8"/><path d="M36.5 172.4 l2.9 5.2" stroke="#3a2e24" stroke-width="1.1"/><path d="M1.6 187.0 l-4.6 6.5" stroke="#40342a" stroke-width="0.9"/><path d="M19.0 196.4 l0.7 5.7" stroke="#40342a" stroke-width="0.6"/><path d="M28.1 160.9 l5.9 5.0" stroke="#8a7a64" stroke-width="1.2"/><path d="M6.9 224.8 l-3.5 4.0" stroke="#3a2e24" stroke-width="1.2"/><path d="M14.7 233.0 l-4.7 5.2" stroke="#2e241c" stroke-width="0.7"/><path d="M34.7 209.2 l0.0 8.0" stroke="#b8a990" stroke-width="0.8"/><path d="M0.9 242.7 l2.2 6.4" stroke="#8a7a64" stroke-width="0.8"/><path d="M4.3 236.3 l2.6 5.3" stroke="#6e5e4a" stroke-width="0.7"/><path d="M45.3 178.7 l2.0 5.5" stroke="#3a2e24" stroke-width="0.9"/><path d="M20.0 196.8 l3.3 8.6" stroke="#2e241c" stroke-width="1.1"/><path d="M41.2 151.5 l2.5 5.2" stroke="#2e241c" stroke-width="0.8"/><path d="M10.9 164.9 l-2.0 8.7" stroke="#7a6a55" stroke-width="0.9"/><path d="M2.8 238.1 l2.6 5.7" stroke="#3a2e24" stroke-width="0.9"/><path d="M10.3 180.4 l4.7 5.1" stroke="#40342a" stroke-width="1.0"/><path d="M40.0 225.0 l4.0 7.7" stroke="#8a7a64" stroke-width="0.6"/><path d="M43.8 179.8 l3.6 5.3" stroke="#8a7a64" stroke-width="1.1"/><path d="M30.5 151.2 l-5.0 5.8" stroke="#b8a990" stroke-width="0.9"/><path d="M39.1 189.6 l-3.4 6.4" stroke="#8a7a64" stroke-width="1.1"/><path d="M18.6 232.8 l3.6 8.5" stroke="#3a2e24" stroke-width="1.1"/><path d="M18.9 181.7 l1.1 4.6" stroke="#6e5e4a" stroke-width="0.9"/><path d="M24.9 191.0 l0.4 8.5" stroke="#2e241c" stroke-width="0.7"/><path d="M26.7 212.6 l4.8 7.2" stroke="#c8bca4" stroke-width="0.8"/><path d="M18.2 144.6 l3.1 5.7" stroke="#b8a990" stroke-width="1.2"/><path d="M2.7 183.5 l5.7 6.6" stroke="#7a6a55" stroke-width="0.8"/><path d="M24.4 145.0 l0.5 7.0" stroke="#8a7a64" stroke-width="0.7"/><path d="M38.4 213.3 l2.7 4.5" stroke="#8a7a64" stroke-width="1.0"/><path d="M1.4 166.0 l-1.9 4.5" stroke="#3a2e24" stroke-width="0.8"/><path d="M22.4 245.8 l2.2 6.0" stroke="#b8a990" stroke-width="1.1"/><path d="M35.3 211.2 l6.7 5.6" stroke="#40342a" stroke-width="0.7"/><path d="M42.6 190.3 l-0.3 8.3" stroke="#2e241c" stroke-width="1.0"/><path d="M46.0 175.6 l-1.2 5.0" stroke="#2e241c" stroke-width="0.9"/><path d="M16.8 227.9 l4.3 8.5" stroke="#6e5e4a" stroke-width="0.8"/><path d="M17.3 222.1 l3.7 5.6" stroke="#2e241c" stroke-width="1.2"/><path d="M36.7 205.8 l1.7 9.7" stroke="#40342a" stroke-width="1.1"/><path d="M46.3 209.1 l6.7 5.5" stroke="#7a6a55" stroke-width="1.2"/><path d="M32.7 191.7 l-2.3 7.6" stroke="#7a6a55" stroke-width="0.9"/><path d="M37.4 224.8 l-3.9 8.4" stroke="#c8bca4" stroke-width="0.7"/><path d="M34.7 228.6 l-3.3 5.9" stroke="#2e241c" stroke-width="0.7"/><path d="M13.2 157.9 l-0.9 7.7" stroke="#b8a990" stroke-width="1.2"/><path d="M47.1 209.0 l3.8 7.4" stroke="#8a7a64" stroke-width="0.8"/><path d="M33.2 228.6 l-1.4 4.5" stroke="#7a6a55" stroke-width="0.8"/><path d="M30.1 238.9 l-2.2 8.6" stroke="#2e241c" stroke-width="1.0"/><path d="M29.4 195.7 l-4.5 6.0" stroke="#6e5e4a" stroke-width="0.7"/><path d="M10.1 147.8 l-3.2 3.9" stroke="#b8a990" stroke-width="0.7"/><path d="M23.8 178.0 l3.7 5.5" stroke="#3a2e24" stroke-width="0.9"/><path d="M25.6 200.0 l5.9 4.9" stroke="#6e5e4a" stroke-width="0.7"/><path d="M14.4 170.0 l-5.5 7.2" stroke="#40342a" stroke-width="0.7"/><path d="M21.5 217.0 l6.9 6.7" stroke="#b8a990" stroke-width="1.2"/><path d="M35.1 208.3 l-4.6 4.0" stroke="#c8bca4" stroke-width="0.8"/><path d="M0.4 244.2 l-3.5 5.9" stroke="#b8a990" stroke-width="0.8"/><path d="M44.1 223.0 l-3.0 8.7" stroke="#b8a990" stroke-width="1.2"/><path d="M47.3 163.2 l-4.4 4.9" stroke="#40342a" stroke-width="1.0"/><path d="M46.7 216.4 l1.9 7.2" stroke="#40342a" stroke-width="0.8"/><path d="M17.9 207.9 l4.4 8.3" stroke="#b8a990" stroke-width="0.7"/><path d="M7.9 171.4 l5.7 7.4" stroke="#7a6a55" stroke-width="1.1"/><path d="M8.3 230.1 l-5.6 8.3" stroke="#40342a" stroke-width="0.7"/><path d="M19.0 155.1 l-5.1 6.5" stroke="#6e5e4a" stroke-width="1.1"/><path d="M17.9 175.6 l-5.5 6.2" stroke="#40342a" stroke-width="1.0"/><path d="M38.9 160.1 l1.4 4.9" stroke="#6e5e4a" stroke-width="1.1"/><path d="M38.1 173.0 l4.5 7.3" stroke="#40342a" stroke-width="1.0"/><path d="M10.7 218.9 l-0.3 6.7" stroke="#c8bca4" stroke-width="0.9"/><path d="M32.6 222.2 l-4.0 3.4" stroke="#b8a990" stroke-width="1.0"/><path d="M29.1 232.7 l6.7 5.9" stroke="#c8bca4" stroke-width="0.8"/><path d="M17.9 221.3 l5.9 7.6" stroke="#2e241c" stroke-width="1.1"/><path d="M23.8 222.5 l1.5 7.3" stroke="#2e241c" stroke-width="1.0"/><path d="M29.5 225.5 l0.2 5.7" stroke="#6e5e4a" stroke-width="0.6"/><path d="M28.4 194.8 l5.0 4.9" stroke="#8a7a64" stroke-width="1.0"/><path d="M15.8 228.7 l2.4 9.2" stroke="#40342a" stroke-width="1.1"/><path d="M23.3 164.3 l-2.3 6.7" stroke="#8a7a64" stroke-width="0.8"/><path d="M3.4 168.5 l-0.4 6.2" stroke="#3a2e24" stroke-width="0.9"/><path d="M31.5 177.6 l1.7 9.9" stroke="#b8a990" stroke-width="0.7"/><path d="M31.4 212.1 l4.3 5.0" stroke="#8a7a64" stroke-width="0.7"/><path d="M49.1 191.4 l-6.0 6.8" stroke="#3a2e24" stroke-width="0.8"/><path d="M45.3 225.2 l3.3 3.9" stroke="#8a7a64" stroke-width="0.9"/><path d="M15.2 230.6 l3.7 6.1" stroke="#8a7a64" stroke-width="1.0"/><path d="M3.6 194.6 l-1.5 5.2" stroke="#3a2e24" stroke-width="1.0"/><path d="M14.0 236.3 l6.6 6.6" stroke="#c8bca4" stroke-width="1.1"/><path d="M17.8 151.3 l4.5 6.7" stroke="#b8a990" stroke-width="0.9"/><path d="M38.7 168.7 l3.6 4.3" stroke="#2e241c" stroke-width="0.9"/><path d="M44.0 216.6 l-0.7 6.9" stroke="#b8a990" stroke-width="0.8"/><path d="M22.0 196.3 l3.1 6.1" stroke="#2e241c" stroke-width="0.7"/><path d="M44.5 243.6 l2.2 4.9" stroke="#40342a" stroke-width="0.6"/><path d="M19.4 230.6 l-0.7 9.3" stroke="#2e241c" stroke-width="0.7"/><path d="M46.7 147.2 l-4.5 4.0" stroke="#6e5e4a" stroke-width="0.9"/><path d="M35.1 174.4 l-3.0 4.4" stroke="#6e5e4a" stroke-width="1.0"/><path d="M3.1 241.9 l1.6 4.8" stroke="#c8bca4" stroke-width="0.7"/><path d="M43.3 215.5 l-1.6 7.0" stroke="#b8a990" stroke-width="1.1"/><path d="M41.3 218.4 l1.2 5.9" stroke="#2e241c" stroke-width="1.1"/><path d="M17.7 211.6 l6.2 6.3" stroke="#c8bca4" stroke-width="0.9"/><path d="M31.6 160.2 l3.6 7.6" stroke="#3a2e24" stroke-width="0.9"/><path d="M25.6 153.4 l1.7 4.8" stroke="#6e5e4a" stroke-width="1.0"/><path d="M9.8 197.9 l-1.0 7.1" stroke="#c8bca4" stroke-width="1.1"/><path d="M40.8 159.0 l-2.9 7.5" stroke="#b8a990" stroke-width="0.7"/><path d="M25.4 191.2 l-2.9 6.3" stroke="#40342a" stroke-width="1.0"/><path d="M25.8 175.4 l1.1 6.6" stroke="#c8bca4" stroke-width="0.6"/><path d="M41.4 208.2 l1.7 5.0" stroke="#40342a" stroke-width="1.0"/><path d="M13.1 192.3 l3.9 4.4" stroke="#7a6a55" stroke-width="0.7"/><path d="M5.4 183.5 l0.1 8.5" stroke="#c8bca4" stroke-width="0.6"/><path d="M44.1 246.3 l-2.0 5.9" stroke="#2e241c" stroke-width="1.0"/><path d="M9.4 148.5 l0.3 7.5" stroke="#40342a" stroke-width="1.1"/><path d="M21.6 145.6 l-3.0 6.0" stroke="#40342a" stroke-width="0.9"/><path d="M12.3 230.9 l-2.6 7.7" stroke="#8a7a64" stroke-width="1.0"/><path d="M17.7 212.0 l-6.5 6.2" stroke="#6e5e4a" stroke-width="1.0"/><path d="M15.6 210.6 l-2.1 7.6" stroke="#7a6a55" stroke-width="0.8"/><path d="M0.1 183.4 l-3.6 8.8" stroke="#c8bca4" stroke-width="1.2"/><path d="M0.4 170.0 l2.3 6.9" stroke="#7a6a55" stroke-width="1.0"/><path d="M0.4 232.3 l3.4 9.0" stroke="#2e241c" stroke-width="1.0"/><path d="M12.4 189.3 l-0.0 5.1" stroke="#8a7a64" stroke-width="0.7"/><path d="M0.9 215.9 l2.9 8.4" stroke="#b8a990" stroke-width="0.8"/><path d="M47.6 179.5 l0.4 9.3" stroke="#3a2e24" stroke-width="0.8"/><path d="M42.1 230.1 l5.5 8.1" stroke="#6e5e4a" stroke-width="0.8"/><path d="M16.7 154.6 l-4.4 5.5" stroke="#6e5e4a" stroke-width="1.1"/><path d="M17.6 153.8 l-5.3 4.9" stroke="#c8bca4" stroke-width="1.0"/><path d="M26.2 196.3 l1.0 5.6" stroke="#8a7a64" stroke-width="1.1"/><path d="M28.3 170.2 l-3.9 4.3" stroke="#2e241c" stroke-width="1.2"/><path d="M36.9 225.9 l-0.4 8.5" stroke="#2e241c" stroke-width="0.7"/><path d="M31.9 177.6 l-4.2 4.3" stroke="#2e241c" stroke-width="0.8"/><path d="M0.5 226.1 l-3.5 3.5" stroke="#7a6a55" stroke-width="1.2"/><path d="M18.6 199.9 l2.3 7.4" stroke="#8a7a64" stroke-width="1.1"/><path d="M35.5 164.3 l-2.6 7.4" stroke="#7a6a55" stroke-width="0.7"/><path d="M22.5 218.0 l-3.4 9.3" stroke="#8a7a64" stroke-width="0.9"/><path d="M5.9 195.8 l4.5 6.9" stroke="#b8a990" stroke-width="0.8"/><path d="M41.9 172.6 l-4.3 4.7" stroke="#c8bca4" stroke-width="0.7"/><path d="M22.3 157.5 l4.4 6.0" stroke="#6e5e4a" stroke-width="1.0"/><path d="M25.9 216.7 l-4.4 5.4" stroke="#8a7a64" stroke-width="1.1"/><path d="M11.7 245.8 l4.8 6.0" stroke="#8a7a64" stroke-width="1.1"/><path d="M25.9 194.8 l2.7 5.8" stroke="#3a2e24" stroke-width="0.8"/></g>
<path d="M200 165l14 4-3 22-10 6z" fill="#7a6a55"/>
<g><ellipse cx="68.7" cy="239.6" rx="9.0" ry="12.1" fill="#291b16" stroke="#2a1c16" stroke-width=".500"/><ellipse cx="87.6" cy="239.6" rx="9.0" ry="12.1" fill="#54423a" stroke="#2a1c16" stroke-width=".500"/><ellipse cx="106.5" cy="239.6" rx="9.0" ry="12.1" fill="#4e3c34" stroke="#2a1c16" stroke-width=".500"/><ellipse cx="125.4" cy="239.6" rx="9.0" ry="12.1" fill="#3a2922" stroke="#2a1c16" stroke-width=".500"/><ellipse cx="144.3" cy="239.6" rx="9.0" ry="12.1" fill="#30211a" stroke="#2a1c16" stroke-width=".500"/><ellipse cx="163.3" cy="239.6" rx="9.0" ry="12.1" fill="#412f26" stroke="#2a1c16" stroke-width=".500"/><ellipse cx="182.2" cy="239.6" rx="9.0" ry="12.1" fill="#33241d" stroke="#2a1c16" stroke-width=".500"/><ellipse cx="201.1" cy="239.6" rx="9.0" ry="12.1" fill="#30211a" stroke="#2a1c16" stroke-width=".500"/><ellipse cx="80.8" cy="254.7" rx="9.0" ry="12.1" fill="#66564c" stroke="#2a1c16" stroke-width=".500"/><ellipse cx="98.7" cy="254.7" rx="9.0" ry="12.1" fill="#54423a" stroke="#2a1c16" stroke-width=".500"/><ellipse cx="116.7" cy="254.7" rx="9.0" ry="12.1" fill="#291b16" stroke="#2a1c16" stroke-width=".500"/><ellipse cx="134.6" cy="254.7" rx="9.0" ry="12.1" fill="#291b16" stroke="#2a1c16" stroke-width=".500"/><ellipse cx="152.6" cy="254.7" rx="9.0" ry="12.1" fill="#30211a" stroke="#2a1c16" stroke-width=".500"/><ellipse cx="170.5" cy="254.7" rx="9.0" ry="12.1" fill="#54423a" stroke="#2a1c16" stroke-width=".500"/><ellipse cx="188.5" cy="254.7" rx="9.0" ry="12.1" fill="#54423a" stroke="#2a1c16" stroke-width=".500"/><ellipse cx="78.8" cy="269.8" rx="9.0" ry="12.1" fill="#30211a" stroke="#2a1c16" stroke-width=".500"/><ellipse cx="97.2" cy="269.8" rx="9.0" ry="12.1" fill="#46342c" stroke="#2a1c16" stroke-width=".500"/><ellipse cx="115.6" cy="269.8" rx="9.0" ry="12.1" fill="#4e3c34" stroke="#2a1c16" stroke-width=".500"/><ellipse cx="134.0" cy="269.8" rx="9.0" ry="12.1" fill="#291b16" stroke="#2a1c16" stroke-width=".500"/><ellipse cx="152.5" cy="269.8" rx="9.0" ry="12.1" fill="#4e3c34" stroke="#2a1c16" stroke-width=".500"/><ellipse cx="170.9" cy="269.8" rx="9.0" ry="12.1" fill="#54423a" stroke="#2a1c16" stroke-width=".500"/><ellipse cx="189.3" cy="269.8" rx="9.0" ry="12.1" fill="#46342c" stroke="#2a1c16" stroke-width=".500"/><ellipse cx="96.5" cy="284.9" rx="9.0" ry="12.1" fill="#33241d" stroke="#2a1c16" stroke-width=".500"/><ellipse cx="114.8" cy="284.9" rx="9.0" ry="12.1" fill="#412f26" stroke="#2a1c16" stroke-width=".500"/><ellipse cx="133.1" cy="284.9" rx="9.0" ry="12.1" fill="#4e3c34" stroke="#2a1c16" stroke-width=".500"/><ellipse cx="151.4" cy="284.9" rx="9.0" ry="12.1" fill="#33241d" stroke="#2a1c16" stroke-width=".500"/><ellipse cx="169.7" cy="284.9" rx="9.0" ry="12.1" fill="#66564c" stroke="#2a1c16" stroke-width=".500"/><ellipse cx="97.2" cy="299.3" rx="9.0" ry="12.1" fill="#33241d" stroke="#2a1c16" stroke-width=".500"/><ellipse cx="114.8" cy="299.3" rx="9.0" ry="12.1" fill="#66564c" stroke="#2a1c16" stroke-width=".500"/><ellipse cx="132.4" cy="299.3" rx="9.0" ry="12.1" fill="#30211a" stroke="#2a1c16" stroke-width=".500"/><ellipse cx="150.0" cy="299.3" rx="9.0" ry="12.1" fill="#46342c" stroke="#2a1c16" stroke-width=".500"/><ellipse cx="167.6" cy="299.3" rx="9.0" ry="12.1" fill="#46342c" stroke="#2a1c16" stroke-width=".500"/><ellipse cx="115.3" cy="312.3" rx="9.0" ry="12.1" fill="#46342c" stroke="#2a1c16" stroke-width=".500"/><ellipse cx="139.9" cy="312.3" rx="9.0" ry="12.1" fill="#30211a" stroke="#2a1c16" stroke-width=".500"/><ellipse cx="115.6" cy="322.4" rx="9.0" ry="12.1" fill="#4e3c34" stroke="#2a1c16" stroke-width=".500"/><ellipse cx="129.9" cy="322.4" rx="9.0" ry="12.1" fill="#3a2922" stroke="#2a1c16" stroke-width=".500"/><ellipse cx="144.1" cy="322.4" rx="9.0" ry="12.1" fill="#412f26" stroke="#2a1c16" stroke-width=".500"/></g>
<path d="M45.2 67.0C50.8 62.8 57.8 58.9 67.0 58.6C76.2 58.4 89.4 64.2 100.5 65.3C111.7 66.5 122.3 67.0 134.0 65.3C145.8 63.7 161.7 56.6 170.9 55.3C180.1 54.0 183.5 55.8 189.3 57.6C195.2 59.5 201.6 59.8 206.1 66.4C210.6 72.9 215.2 85.9 216.2 97.2C217.1 108.5 214.1 122.3 211.8 134.0C209.5 145.8 204.6 155.3 202.4 167.6C200.2 179.8 198.3 196.6 198.4 207.8C198.4 218.9 202.3 226.8 202.7 234.6C203.2 242.4 203.6 251.3 201.1 254.7C198.6 258.0 192.1 258.0 187.7 254.7C183.2 251.3 179.3 232.9 174.3 234.6C169.2 236.3 162.0 259.2 157.5 264.7C153.0 270.3 158.1 268.1 147.5 268.1C136.8 268.1 106.4 270.3 93.8 264.7C81.3 259.2 77.6 236.3 72.1 234.6C66.5 232.9 64.5 251.6 60.3 254.7C56.1 257.8 48.6 256.9 46.9 253.0C45.2 249.1 50.3 242.1 50.3 231.2C50.3 220.3 49.7 202.2 46.9 187.7C44.1 173.1 37.1 156.4 33.5 144.1C29.9 131.8 25.1 124.0 25.1 113.9C25.1 103.9 30.2 91.6 33.5 83.8C36.9 76.0 39.7 71.2 45.2 67.0Z" fill="url(#lea)"/>
<path d="M63.7 25.1C66.7 20.4 76.0 12.8 83.8 11.7C91.6 10.6 101.1 18.4 110.6 18.4C120.1 18.4 132.9 10.9 140.8 11.7C148.6 12.6 153.0 17.6 157.5 23.5C162.0 29.3 167.6 41.1 167.6 46.9C167.6 52.8 163.1 55.6 157.5 58.6C151.9 61.7 143.5 64.2 134.0 65.3C124.6 66.5 110.6 66.5 100.5 65.3C90.5 64.2 79.6 62.8 73.7 58.6C67.9 54.5 67.0 45.8 65.3 40.2C63.7 34.6 60.6 29.9 63.7 25.1Z" fill="#54463a"/><g clip-path="url(#furc)" fill="none"><path d="M67.4 36.6 l3.5 7.5" stroke="#c8bca4" stroke-width="0.9"/><path d="M150.3 40.8 l-0.4 6.9" stroke="#3a2e24" stroke-width="1.1"/><path d="M134.5 59.9 l-6.0 8.0" stroke="#2e241c" stroke-width="1.0"/><path d="M97.6 39.1 l-0.7 5.2" stroke="#3a2e24" stroke-width="1.0"/><path d="M166.3 24.4 l4.6 5.7" stroke="#7a6a55" stroke-width="0.7"/><path d="M146.8 32.1 l3.7 5.1" stroke="#40342a" stroke-width="1.1"/><path d="M68.3 43.0 l6.2 5.8" stroke="#6e5e4a" stroke-width="0.9"/><path d="M159.4 25.0 l2.2 4.3" stroke="#b8a990" stroke-width="0.6"/><path d="M126.0 11.7 l3.6 5.9" stroke="#c8bca4" stroke-width="0.7"/><path d="M68.1 56.6 l3.2 9.3" stroke="#40342a" stroke-width="0.8"/><path d="M154.0 30.8 l-5.1 6.6" stroke="#8a7a64" stroke-width="1.0"/><path d="M161.4 37.2 l1.1 8.5" stroke="#3a2e24" stroke-width="1.2"/><path d="M109.1 23.9 l2.3 6.1" stroke="#40342a" stroke-width="1.2"/><path d="M96.4 30.2 l-0.9 5.3" stroke="#6e5e4a" stroke-width="0.9"/><path d="M134.2 29.0 l-3.1 8.1" stroke="#b8a990" stroke-width="1.0"/><path d="M162.9 11.2 l1.9 7.8" stroke="#c8bca4" stroke-width="1.0"/><path d="M96.9 29.6 l2.2 6.3" stroke="#c8bca4" stroke-width="0.8"/><path d="M102.9 51.5 l5.8 5.1" stroke="#2e241c" stroke-width="0.8"/><path d="M86.8 53.2 l2.6 5.1" stroke="#40342a" stroke-width="1.0"/><path d="M73.8 42.3 l-6.0 5.7" stroke="#3a2e24" stroke-width="0.9"/><path d="M152.6 19.1 l2.4 7.8" stroke="#7a6a55" stroke-width="0.8"/><path d="M145.4 11.9 l-4.7 4.3" stroke="#2e241c" stroke-width="1.1"/><path d="M99.0 54.4 l5.4 5.9" stroke="#2e241c" stroke-width="0.9"/><path d="M117.5 55.6 l0.5 8.1" stroke="#c8bca4" stroke-width="0.9"/><path d="M106.2 59.4 l2.7 3.8" stroke="#40342a" stroke-width="0.9"/><path d="M166.1 48.5 l5.3 4.8" stroke="#c8bca4" stroke-width="0.9"/><path d="M156.1 56.2 l-5.9 7.9" stroke="#8a7a64" stroke-width="1.1"/><path d="M68.4 58.5 l-3.3 9.1" stroke="#40342a" stroke-width="0.9"/><path d="M65.0 50.0 l3.5 5.2" stroke="#b8a990" stroke-width="0.9"/><path d="M106.7 60.4 l-1.3 6.4" stroke="#c8bca4" stroke-width="1.2"/><path d="M119.9 53.6 l4.2 4.1" stroke="#8a7a64" stroke-width="0.9"/><path d="M148.5 19.2 l-4.8 8.3" stroke="#2e241c" stroke-width="1.1"/><path d="M64.5 43.8 l-3.0 3.9" stroke="#c8bca4" stroke-width="0.7"/><path d="M127.9 37.9 l4.6 4.4" stroke="#b8a990" stroke-width="1.1"/><path d="M144.2 12.5 l5.3 5.0" stroke="#b8a990" stroke-width="1.1"/><path d="M72.6 37.0 l2.1 6.0" stroke="#6e5e4a" stroke-width="0.8"/><path d="M104.2 26.4 l4.1 9.1" stroke="#40342a" stroke-width="0.7"/><path d="M121.4 48.4 l1.1 5.0" stroke="#2e241c" stroke-width="0.6"/><path d="M111.5 44.9 l-0.6 8.1" stroke="#b8a990" stroke-width="1.0"/><path d="M108.5 30.0 l0.1 8.5" stroke="#40342a" stroke-width="1.2"/><path d="M107.1 11.0 l3.0 5.4" stroke="#8a7a64" stroke-width="1.1"/><path d="M87.0 17.0 l4.8 4.3" stroke="#c8bca4" stroke-width="0.7"/><path d="M135.4 60.4 l-3.7 8.5" stroke="#40342a" stroke-width="1.0"/><path d="M139.9 40.3 l5.1 5.9" stroke="#b8a990" stroke-width="0.9"/><path d="M88.2 30.9 l-0.4 7.7" stroke="#40342a" stroke-width="0.7"/><path d="M66.1 55.2 l5.8 7.2" stroke="#7a6a55" stroke-width="1.1"/><path d="M162.6 41.1 l-2.5 4.2" stroke="#3a2e24" stroke-width="0.7"/><path d="M141.5 60.2 l4.6 4.5" stroke="#2e241c" stroke-width="1.1"/><path d="M88.8 19.7 l3.5 7.2" stroke="#40342a" stroke-width="0.8"/><path d="M125.9 60.4 l-1.0 9.8" stroke="#40342a" stroke-width="0.9"/><path d="M164.8 32.2 l-2.4 5.0" stroke="#7a6a55" stroke-width="0.7"/><path d="M105.3 57.6 l4.2 6.0" stroke="#7a6a55" stroke-width="1.1"/><path d="M117.4 33.8 l-2.2 5.3" stroke="#c8bca4" stroke-width="1.1"/><path d="M78.9 37.7 l-6.5 6.6" stroke="#c8bca4" stroke-width="1.0"/><path d="M152.5 42.0 l-1.5 9.9" stroke="#3a2e24" stroke-width="0.8"/><path d="M91.5 53.2 l4.0 6.6" stroke="#3a2e24" stroke-width="0.8"/><path d="M144.1 17.8 l-5.6 4.6" stroke="#3a2e24" stroke-width="0.9"/><path d="M150.4 54.1 l-0.7 7.2" stroke="#8a7a64" stroke-width="1.1"/><path d="M105.3 49.4 l-5.3 4.9" stroke="#3a2e24" stroke-width="1.1"/><path d="M131.0 51.7 l4.1 4.2" stroke="#c8bca4" stroke-width="0.7"/><path d="M83.4 23.9 l4.5 7.2" stroke="#b8a990" stroke-width="1.1"/><path d="M90.2 56.4 l2.3 6.6" stroke="#8a7a64" stroke-width="0.7"/><path d="M91.1 59.0 l5.3 4.8" stroke="#6e5e4a" stroke-width="0.6"/><path d="M98.5 33.4 l0.1 5.8" stroke="#7a6a55" stroke-width="0.8"/><path d="M120.2 16.4 l3.3 7.6" stroke="#8a7a64" stroke-width="0.9"/><path d="M118.5 23.5 l-0.4 8.4" stroke="#6e5e4a" stroke-width="1.1"/><path d="M94.4 46.3 l-2.5 8.7" stroke="#c8bca4" stroke-width="0.7"/><path d="M161.8 28.2 l-0.9 7.5" stroke="#7a6a55" stroke-width="0.9"/><path d="M69.9 25.8 l-3.5 8.0" stroke="#2e241c" stroke-width="0.7"/><path d="M156.1 45.2 l6.1 7.5" stroke="#2e241c" stroke-width="1.2"/><path d="M130.7 44.9 l0.9 6.2" stroke="#2e241c" stroke-width="0.9"/><path d="M96.1 19.5 l6.0 6.1" stroke="#40342a" stroke-width="0.8"/><path d="M91.3 30.6 l-3.1 3.9" stroke="#c8bca4" stroke-width="0.7"/><path d="M143.6 29.0 l2.0 6.5" stroke="#8a7a64" stroke-width="0.8"/><path d="M151.7 16.1 l2.1 4.8" stroke="#8a7a64" stroke-width="0.9"/><path d="M158.2 16.1 l-2.7 7.2" stroke="#40342a" stroke-width="1.1"/><path d="M141.5 41.8 l4.1 5.5" stroke="#3a2e24" stroke-width="0.9"/><path d="M81.4 19.6 l-4.1 5.3" stroke="#c8bca4" stroke-width="0.6"/><path d="M147.1 57.8 l-4.9 4.7" stroke="#c8bca4" stroke-width="1.0"/><path d="M165.2 46.9 l3.3 8.7" stroke="#7a6a55" stroke-width="0.6"/><path d="M83.5 44.1 l5.7 6.7" stroke="#3a2e24" stroke-width="0.9"/><path d="M118.1 34.7 l3.9 6.4" stroke="#b8a990" stroke-width="1.1"/><path d="M159.9 60.8 l4.0 4.8" stroke="#2e241c" stroke-width="0.7"/><path d="M146.0 43.5 l4.8 4.6" stroke="#3a2e24" stroke-width="0.9"/><path d="M115.5 11.1 l1.8 6.2" stroke="#6e5e4a" stroke-width="1.0"/><path d="M77.6 56.1 l-1.7 9.5" stroke="#8a7a64" stroke-width="1.0"/><path d="M99.4 53.3 l-6.5 6.6" stroke="#40342a" stroke-width="1.0"/><path d="M86.6 27.0 l-3.4 6.0" stroke="#3a2e24" stroke-width="1.0"/><path d="M104.3 35.4 l6.5 6.6" stroke="#3a2e24" stroke-width="1.0"/><path d="M95.3 35.0 l-3.1 6.1" stroke="#2e241c" stroke-width="0.9"/><path d="M67.5 23.8 l-4.2 5.7" stroke="#6e5e4a" stroke-width="1.0"/><path d="M86.9 10.2 l4.4 7.7" stroke="#2e241c" stroke-width="1.1"/><path d="M119.1 18.6 l5.9 5.1" stroke="#2e241c" stroke-width="1.0"/><path d="M78.1 42.7 l0.6 5.7" stroke="#b8a990" stroke-width="0.8"/><path d="M96.7 11.8 l-2.2 5.5" stroke="#b8a990" stroke-width="0.8"/><path d="M66.4 61.8 l2.5 4.5" stroke="#7a6a55" stroke-width="0.7"/><path d="M98.3 16.3 l-5.3 5.8" stroke="#c8bca4" stroke-width="0.8"/><path d="M145.5 35.0 l-4.4 4.5" stroke="#3a2e24" stroke-width="0.9"/><path d="M66.8 28.1 l-5.0 4.0" stroke="#b8a990" stroke-width="1.0"/><path d="M164.4 41.8 l3.8 3.0" stroke="#8a7a64" stroke-width="0.6"/><path d="M115.9 35.9 l3.9 6.3" stroke="#6e5e4a" stroke-width="0.7"/><path d="M164.8 35.6 l-5.0 8.2" stroke="#b8a990" stroke-width="0.8"/><path d="M141.8 43.9 l1.8 9.6" stroke="#2e241c" stroke-width="1.1"/><path d="M75.6 31.0 l2.5 8.0" stroke="#40342a" stroke-width="0.7"/><path d="M140.5 49.4 l-4.4 6.3" stroke="#2e241c" stroke-width="0.8"/><path d="M106.8 22.4 l-3.5 6.4" stroke="#c8bca4" stroke-width="1.1"/><path d="M116.3 50.4 l-5.7 6.2" stroke="#7a6a55" stroke-width="0.6"/><path d="M81.5 50.4 l-2.8 4.3" stroke="#8a7a64" stroke-width="0.8"/><path d="M126.1 53.0 l5.7 5.6" stroke="#b8a990" stroke-width="0.9"/><path d="M156.8 49.3 l2.0 6.4" stroke="#8a7a64" stroke-width="0.7"/><path d="M145.4 59.2 l1.8 6.1" stroke="#7a6a55" stroke-width="0.6"/><path d="M131.1 23.0 l4.0 3.8" stroke="#2e241c" stroke-width="1.0"/><path d="M64.9 22.4 l-4.4 3.9" stroke="#40342a" stroke-width="0.9"/><path d="M157.9 27.2 l-5.7 6.9" stroke="#7a6a55" stroke-width="0.7"/><path d="M71.9 54.3 l3.1 3.7" stroke="#8a7a64" stroke-width="0.7"/><path d="M156.5 14.7 l0.4 5.9" stroke="#8a7a64" stroke-width="1.0"/><path d="M142.8 56.8 l2.2 7.6" stroke="#7a6a55" stroke-width="1.1"/><path d="M94.0 60.7 l0.7 6.7" stroke="#8a7a64" stroke-width="0.9"/><path d="M111.9 49.1 l4.5 4.7" stroke="#7a6a55" stroke-width="1.1"/><path d="M159.7 46.9 l2.1 8.6" stroke="#8a7a64" stroke-width="1.0"/><path d="M85.9 28.8 l-5.1 4.1" stroke="#40342a" stroke-width="0.9"/><path d="M89.7 27.4 l-2.5 5.2" stroke="#3a2e24" stroke-width="1.1"/><path d="M166.2 42.9 l-5.3 5.4" stroke="#40342a" stroke-width="0.8"/><path d="M83.5 43.5 l1.5 9.4" stroke="#40342a" stroke-width="0.9"/><path d="M124.7 11.9 l-3.5 3.3" stroke="#8a7a64" stroke-width="0.6"/><path d="M79.3 37.1 l5.1 5.1" stroke="#3a2e24" stroke-width="1.0"/><path d="M92.3 33.2 l2.4 8.3" stroke="#c8bca4" stroke-width="0.7"/><path d="M109.8 58.8 l0.6 5.8" stroke="#7a6a55" stroke-width="1.1"/><path d="M136.4 62.4 l-7.1 6.1" stroke="#6e5e4a" stroke-width="1.2"/><path d="M108.5 60.5 l0.5 10.0" stroke="#3a2e24" stroke-width="0.8"/><path d="M152.3 25.3 l0.6 9.4" stroke="#c8bca4" stroke-width="1.0"/><path d="M160.3 37.9 l6.2 5.2" stroke="#2e241c" stroke-width="0.9"/><path d="M80.9 12.7 l4.5 7.6" stroke="#7a6a55" stroke-width="0.8"/><path d="M164.0 29.5 l-0.7 7.3" stroke="#3a2e24" stroke-width="0.6"/><path d="M108.6 28.2 l5.5 5.3" stroke="#8a7a64" stroke-width="0.9"/><path d="M90.9 46.1 l0.0 8.6" stroke="#6e5e4a" stroke-width="0.6"/><path d="M108.3 43.7 l-3.0 9.1" stroke="#3a2e24" stroke-width="1.2"/><path d="M140.9 55.2 l1.4 8.6" stroke="#6e5e4a" stroke-width="0.9"/><path d="M92.7 19.1 l6.2 5.3" stroke="#7a6a55" stroke-width="0.9"/><path d="M132.8 59.8 l-4.2 6.7" stroke="#40342a" stroke-width="0.8"/><path d="M129.3 25.8 l3.8 3.9" stroke="#8a7a64" stroke-width="0.8"/><path d="M100.2 34.4 l-3.7 6.1" stroke="#2e241c" stroke-width="0.9"/><path d="M78.2 12.1 l0.2 5.9" stroke="#7a6a55" stroke-width="1.2"/><path d="M127.3 11.7 l-1.0 7.6" stroke="#7a6a55" stroke-width="0.7"/><path d="M145.3 50.5 l2.9 6.4" stroke="#8a7a64" stroke-width="0.8"/><path d="M117.2 58.1 l-6.0 5.5" stroke="#3a2e24" stroke-width="0.8"/><path d="M99.6 45.1 l-4.9 4.8" stroke="#b8a990" stroke-width="0.8"/><path d="M162.4 60.7 l2.2 6.4" stroke="#c8bca4" stroke-width="0.6"/><path d="M107.0 32.2 l-4.8 5.5" stroke="#3a2e24" stroke-width="1.0"/><path d="M136.2 16.2 l-1.3 5.2" stroke="#b8a990" stroke-width="1.2"/><path d="M164.9 47.2 l1.2 9.9" stroke="#7a6a55" stroke-width="0.8"/><path d="M120.4 12.6 l4.5 8.7" stroke="#2e241c" stroke-width="0.7"/><path d="M137.0 47.1 l0.4 6.8" stroke="#b8a990" stroke-width="0.7"/><path d="M69.3 50.8 l3.1 4.8" stroke="#2e241c" stroke-width="1.1"/><path d="M68.7 61.6 l-0.4 6.7" stroke="#8a7a64" stroke-width="0.9"/><path d="M82.6 11.5 l3.5 4.0" stroke="#c8bca4" stroke-width="0.7"/><path d="M100.3 59.1 l3.9 4.1" stroke="#6e5e4a" stroke-width="1.2"/><path d="M165.5 23.2 l2.5 9.5" stroke="#7a6a55" stroke-width="0.7"/><path d="M151.7 35.4 l-3.1 6.8" stroke="#7a6a55" stroke-width="0.9"/><path d="M111.9 38.9 l0.8 7.5" stroke="#40342a" stroke-width="0.7"/><path d="M125.4 60.1 l-3.3 4.6" stroke="#2e241c" stroke-width="0.8"/><path d="M150.9 17.0 l-0.9 4.9" stroke="#2e241c" stroke-width="0.7"/><path d="M65.1 56.7 l-5.1 8.6" stroke="#6e5e4a" stroke-width="0.9"/><path d="M143.3 15.0 l-0.5 7.0" stroke="#2e241c" stroke-width="1.0"/><path d="M86.4 34.5 l-0.9 8.1" stroke="#6e5e4a" stroke-width="1.0"/><path d="M143.8 48.8 l2.3 8.1" stroke="#6e5e4a" stroke-width="0.8"/><path d="M165.1 24.5 l4.6 5.7" stroke="#6e5e4a" stroke-width="1.0"/><path d="M89.5 33.4 l2.2 4.9" stroke="#6e5e4a" stroke-width="0.9"/><path d="M154.6 63.0 l-0.4 7.1" stroke="#b8a990" stroke-width="0.6"/><path d="M107.9 55.5 l-2.4 4.4" stroke="#40342a" stroke-width="0.8"/></g>
<path d="M45.2 68.7L67.0 60.3L100.5 66.7L134.0 66.7L170.9 56.6L189.7 59.7L197.7 100.5L190.3 117.3L118.0 162.5L53.6 113.9L45.2 93.8Z" fill="url(#shd)" stroke="#3a1a10" stroke-width="1"/>
<path d="M72 84l15 2-2 32-14-12z" fill="#43200f" opacity=".7" filter="url(#ab2)"/><path d="M151 84l14-2 2 24-14 12z" fill="#43200f" opacity=".7" filter="url(#ab2)"/>
<!-- straps -->
<path d="M33.5 119.0L40.2 117.3L115.6 167.6L110.6 175.9L35.2 129.0Z" fill="#5c2b1b" stroke="#2e140c" stroke-width=".8"/><path d="M202.7 119.0L197.1 117.3L129.0 167.6L134.0 175.9L201.1 129.0Z" fill="#5c2b1b" stroke="#3a1a10" stroke-width=".8"/>
<path d="M63.7 214.5C66.7 209.7 73.2 192.1 82.1 186.0C91.0 179.8 105.0 177.5 117.3 177.6C129.6 177.7 145.5 180.5 155.8 186.7C166.2 192.8 175.4 209.8 179.3 214.5" fill="none" stroke="#3a1a10" stroke-width="14.500"/><path d="M63.7 214.5C66.7 209.7 73.2 192.1 82.1 186.0C91.0 179.8 105.0 177.5 117.3 177.6C129.6 177.7 145.5 180.5 155.8 186.7C166.2 192.8 175.4 209.8 179.3 214.5" fill="none" stroke="#5f2d1c" stroke-width="13"/>
<path d="M70.4 217.8C71.2 212.8 73.3 208.3 77.7 204.4C82.2 200.5 90.6 196.4 97.2 194.4C103.8 192.3 110.6 192.0 117.3 192.0C124.0 192.0 130.3 192.6 137.4 194.4C144.5 196.2 153.5 198.8 160.2 202.7C166.9 206.7 174.9 213.1 177.6 217.8C180.4 222.6 178.3 226.2 176.6 231.2C174.9 236.3 171.2 242.1 167.6 248.0C163.9 253.9 158.2 263.6 154.8 266.4C151.5 269.2 153.7 265.0 147.5 264.7C141.2 264.5 125.9 264.7 117.3 264.7C108.6 264.7 100.8 266.4 95.5 264.7C90.2 263.1 89.2 259.7 85.5 254.7C81.7 249.7 75.6 240.7 73.1 234.6C70.5 228.4 69.6 222.9 70.4 217.8Z" fill="url(#low)" stroke="#3a1a10" stroke-width=".8"/>
<!-- emblem -->
<g fill="none" stroke="#e6d8a2" stroke-width="1.100" stroke-linecap="round">
<path d="M119 84v50M116 86c-6 8 6 12 0 20s6 12 0 20M122 86c6 8-6 12 0 20s-6 12 0 20"/>
<path d="M117 88c-8-8-24-8-26 2s12 12 14 4-8-8-10-2M121 88c8-8 24-8 26 2s-12 12-14 4 8-8 10-2"/>
<path d="M119 128c-10 4-14 14-8 20 6-2 10-8 8-20 2 12 6 18 12 20 4-8 0-16-12-20M108 140c6-8 18-8 24 0"/>
<path d="M110 138c-10-4-14-12-22-10s-8 8-10 6M128 138c10-4 14-12 22-10s8 8 10 6"/>
</g>
<circle cx="51.9" cy="97.2" r="1.500" fill="#b9b3b0"/><circle cx="186.0" cy="95.5" r="1.500" fill="#b9b3b0"/><circle cx="119.0" cy="82.1" r="1.500" fill="#b9b3b0"/><circle cx="119.0" cy="155.8" r="1.500" fill="#b9b3b0"/><circle cx="62.0" cy="152.5" r="1.500" fill="#b9b3b0"/><circle cx="83.8" cy="169.2" r="1.500" fill="#b9b3b0"/><circle cx="154.2" cy="172.6" r="1.500" fill="#b9b3b0"/><circle cx="174.3" cy="157.5" r="1.500" fill="#b9b3b0"/><circle cx="85.5" cy="191.7" r="1.500" fill="#b9b3b0"/><circle cx="119.0" cy="183.6" r="1.500" fill="#b9b3b0"/><circle cx="155.2" cy="191.0" r="1.500" fill="#b9b3b0"/><circle cx="69.7" cy="203.4" r="1.500" fill="#b9b3b0"/><circle cx="172.6" cy="202.7" r="1.500" fill="#b9b3b0"/><circle cx="46.9" cy="137.4" r="1.500" fill="#b9b3b0"/><circle cx="197.7" cy="135.7" r="1.500" fill="#b9b3b0"/>
</g>
</svg></div>
    <svg style="position:absolute;right:1px;bottom:1px" width="9" height="9" viewBox="0 0 9 9"><path d="M8.500 1L1 8.500M8.500 4.500L4.500 8.500M8.500 7.500L7.500 8.500" stroke="#c9c6cc" stroke-width="0.9"/></svg>
  </div>
  <!-- neck tattoo -->
  <div class="bimg" style="left:1096px;top:577px;width:136px;height:168px">
    <svg style="position:absolute;left:0;top:0" width="132" height="120" viewBox="0 0 132 120"><path d="M64.90 41.20L33.30 95.93L96.50 95.93zM64.90 57.60L47.50 87.73L82.30 87.73z" fill="#000" fill-rule="evenodd"/><path d="M56.30 26.20L24.60 81.11L88.00 81.11zM56.30 42.60L38.80 72.91L73.80 72.91z" fill="#000" fill-rule="evenodd"/><path d="M73.40 26.20L41.90 80.76L104.90 80.76zM73.40 42.60L56.10 72.56L90.70 72.56z" fill="#000" fill-rule="evenodd"/><g stroke="#fff" stroke-width="0.8" fill="none"><path d="M63.800 40.100L60 46.700M69 49.100L64.700 56.200M73.500 72.800L78.500 80.900M84.900 72.800L89.400 80.600M41 81.700L49 81.700"/></g></svg>
    <div class="cap" style="left:18px;top:137px">Neck tattoo</div>
    <svg style="position:absolute;right:1px;bottom:1px" width="9" height="9" viewBox="0 0 9 9"><path d="M8.500 1L1 8.500M8.500 4.500L4.500 8.500M8.500 7.500L7.500 8.500" stroke="#9a9ca2" stroke-width="0.9"/></svg>
  </div>

</div>
</body>
</html>
